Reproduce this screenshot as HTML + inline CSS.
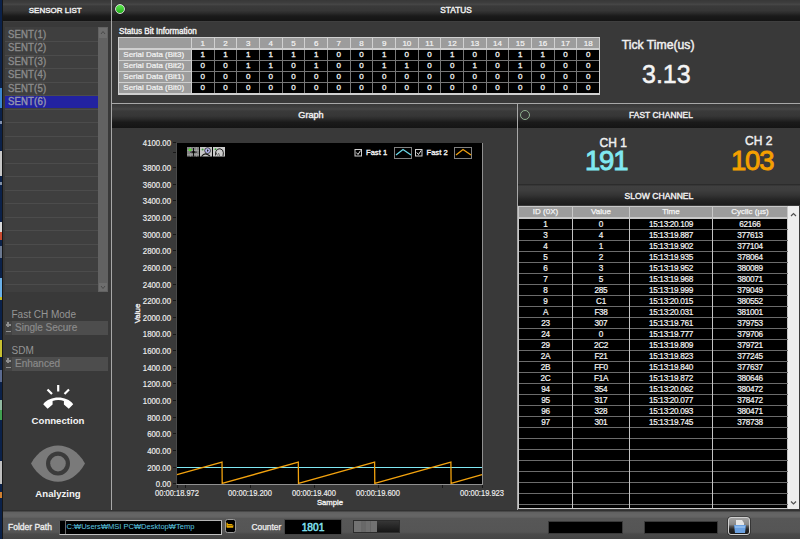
<!DOCTYPE html><html><head><meta charset="utf-8"><style>html,body{margin:0;padding:0;}body{width:800px;height:539px;overflow:hidden;position:relative;background:#393939;font-family:"Liberation Sans",sans-serif;}div{box-sizing:border-box;}</style></head><body>
<div style="position:absolute;left:0px;top:0px;width:2px;height:539px;background:#0b2149;"></div>
<div style="position:absolute;left:2px;top:0px;width:1px;height:539px;background:#161616;"></div>
<div style="position:absolute;left:0px;top:88px;width:2px;height:20px;background:#3a86d0;"></div>
<div style="position:absolute;left:0px;top:121px;width:2px;height:3px;background:#8090b0;"></div>
<div style="position:absolute;left:0px;top:151px;width:2px;height:25px;background:#c8c8c8;"></div>
<div style="position:absolute;left:0px;top:182px;width:2px;height:3px;background:#8090a8;"></div>
<div style="position:absolute;left:0px;top:222px;width:2px;height:10px;background:#d8d8d8;"></div>
<div style="position:absolute;left:0px;top:232px;width:2px;height:8px;background:#c84a30;"></div>
<div style="position:absolute;left:0px;top:246px;width:2px;height:12px;background:#6a7890;"></div>
<div style="position:absolute;left:0px;top:278px;width:2px;height:19px;background:#6ab0e8;"></div>
<div style="position:absolute;left:0px;top:297px;width:2px;height:3px;background:#c8b820;"></div>
<div style="position:absolute;left:0px;top:340px;width:2px;height:17px;background:#c8c030;"></div>
<div style="position:absolute;left:0px;top:370px;width:2px;height:12px;background:#5a6a90;"></div>
<div style="position:absolute;left:0px;top:400px;width:2px;height:10px;background:#90b8a0;"></div>
<div style="position:absolute;left:0px;top:410px;width:2px;height:10px;background:#40a050;"></div>
<div style="position:absolute;left:0px;top:461px;width:2px;height:23px;background:#c0c0c0;"></div>
<div style="position:absolute;left:0px;top:492px;width:2px;height:6px;background:#d08030;"></div>
<div style="position:absolute;left:3px;top:0px;width:108px;height:21px;background:linear-gradient(#383838 0%,#3d3d3d 12%,#464646 21%,#3a3a3a 29%,#363636 50%,#2a2a2a 63%,#1a1a1a 76%,#141414 100%);"></div>
<div style="position:absolute;left:-144.8px;top:7.0px;width:400px;text-align:center;font-size:8.0px;line-height:8.0px;color:#f0f0f0;font-weight:normal;white-space:nowrap;-webkit-text-stroke:0.4px #f0f0f0;">SENSOR LIST</div>
<div style="position:absolute;left:3px;top:21px;width:108px;height:490px;background:#393939;"></div>
<div style="position:absolute;left:3px;top:21px;width:108px;height:1px;background:#3f3f3f;"></div>
<div style="position:absolute;left:5px;top:27px;width:93px;height:265px;background:#3f3f3f;"></div>
<div style="position:absolute;left:8.3px;top:29.7px;font-size:10.2px;line-height:10.2px;color:#8c8c8c;font-weight:normal;white-space:nowrap;-webkit-text-stroke:0.35px #8c8c8c;transform:scaleX(0.94);transform-origin:0 0;letter-spacing:0.15px;">SENT(1)</div>
<div style="position:absolute;left:5px;top:41.0px;width:93px;height:1.3px;background:#4c4c4c;"></div>
<div style="position:absolute;left:8.3px;top:43.199999999999996px;font-size:10.2px;line-height:10.2px;color:#8c8c8c;font-weight:normal;white-space:nowrap;-webkit-text-stroke:0.35px #8c8c8c;transform:scaleX(0.94);transform-origin:0 0;letter-spacing:0.15px;">SENT(2)</div>
<div style="position:absolute;left:5px;top:54.5px;width:93px;height:1.3px;background:#4c4c4c;"></div>
<div style="position:absolute;left:8.3px;top:56.699999999999996px;font-size:10.2px;line-height:10.2px;color:#8c8c8c;font-weight:normal;white-space:nowrap;-webkit-text-stroke:0.35px #8c8c8c;transform:scaleX(0.94);transform-origin:0 0;letter-spacing:0.15px;">SENT(3)</div>
<div style="position:absolute;left:5px;top:68.0px;width:93px;height:1.3px;background:#4c4c4c;"></div>
<div style="position:absolute;left:8.3px;top:70.2px;font-size:10.2px;line-height:10.2px;color:#8c8c8c;font-weight:normal;white-space:nowrap;-webkit-text-stroke:0.35px #8c8c8c;transform:scaleX(0.94);transform-origin:0 0;letter-spacing:0.15px;">SENT(4)</div>
<div style="position:absolute;left:5px;top:81.5px;width:93px;height:1.3px;background:#4c4c4c;"></div>
<div style="position:absolute;left:8.3px;top:83.7px;font-size:10.2px;line-height:10.2px;color:#8c8c8c;font-weight:normal;white-space:nowrap;-webkit-text-stroke:0.35px #8c8c8c;transform:scaleX(0.94);transform-origin:0 0;letter-spacing:0.15px;">SENT(5)</div>
<div style="position:absolute;left:5px;top:95.3px;width:93px;height:13px;background:#2222a0;"></div>
<div style="position:absolute;left:5px;top:95.0px;width:93px;height:1.3px;background:#4c4c4c;"></div>
<div style="position:absolute;left:8.3px;top:97.2px;font-size:10.2px;line-height:10.2px;color:#9898b0;font-weight:normal;white-space:nowrap;-webkit-text-stroke:0.35px #9898b0;transform:scaleX(0.94);transform-origin:0 0;letter-spacing:0.15px;">SENT(6)</div>
<div style="position:absolute;left:5px;top:108.5px;width:93px;height:1.3px;background:#4c4c4c;"></div>
<div style="position:absolute;left:5px;top:122.0px;width:93px;height:1.3px;background:#4c4c4c;"></div>
<div style="position:absolute;left:5px;top:135.5px;width:93px;height:1.3px;background:#4c4c4c;"></div>
<div style="position:absolute;left:5px;top:149.0px;width:93px;height:1.3px;background:#4c4c4c;"></div>
<div style="position:absolute;left:5px;top:162.5px;width:93px;height:1.3px;background:#4c4c4c;"></div>
<div style="position:absolute;left:5px;top:176.0px;width:93px;height:1.3px;background:#4c4c4c;"></div>
<div style="position:absolute;left:5px;top:189.5px;width:93px;height:1.3px;background:#4c4c4c;"></div>
<div style="position:absolute;left:5px;top:203.0px;width:93px;height:1.3px;background:#4c4c4c;"></div>
<div style="position:absolute;left:5px;top:216.5px;width:93px;height:1.3px;background:#4c4c4c;"></div>
<div style="position:absolute;left:5px;top:230.0px;width:93px;height:1.3px;background:#4c4c4c;"></div>
<div style="position:absolute;left:5px;top:243.5px;width:93px;height:1.3px;background:#4c4c4c;"></div>
<div style="position:absolute;left:5px;top:257.0px;width:93px;height:1.3px;background:#4c4c4c;"></div>
<div style="position:absolute;left:5px;top:270.5px;width:93px;height:1.3px;background:#4c4c4c;"></div>
<div style="position:absolute;left:5px;top:284.0px;width:93px;height:1.3px;background:#4c4c4c;"></div>
<div style="position:absolute;left:98px;top:27px;width:10px;height:265px;background:#626262;"></div>
<div style="position:absolute;left:99px;top:28px;width:8px;height:10px;background:#6e6e6e;"></div>
<div style="position:absolute;left:99px;top:283px;width:8px;height:8px;background:#6e6e6e;"></div>
<svg style="position:absolute;left:99px;top:28px" width="8" height="10"><path d="M2 6 L4 3.5 L6 6" stroke="#4a4a4a" stroke-width="1" fill="none"/></svg>
<svg style="position:absolute;left:99px;top:283px" width="8" height="8"><path d="M2 3 L4 5.5 L6 3" stroke="#4a4a4a" stroke-width="1" fill="none"/></svg>
<div style="position:absolute;left:11.5px;top:310px;font-size:10px;line-height:10px;color:#959595;font-weight:normal;white-space:nowrap;">Fast CH Mode</div>
<div style="position:absolute;left:5px;top:321px;width:103px;height:14px;background:#4d4d4d;"></div>
<div style="position:absolute;left:5px;top:321px;width:6.5px;height:14px;background:#434343;"></div>
<div style="position:absolute;left:5.5px;top:324px;width:5px;height:1.5px;background:#8e8e8e;"></div>
<div style="position:absolute;left:7.2px;top:322.3px;width:1.6px;height:5px;background:#8e8e8e;"></div>
<div style="position:absolute;left:5.5px;top:330.5px;width:5px;height:1.5px;background:#8e8e8e;"></div>
<div style="position:absolute;left:15px;top:323.3px;font-size:10px;line-height:10px;color:#8a8a8a;font-weight:normal;white-space:nowrap;-webkit-text-stroke:0.2px #8a8a8a;">Single Secure</div>
<div style="position:absolute;left:11.5px;top:346px;font-size:10px;line-height:10px;color:#959595;font-weight:normal;white-space:nowrap;">SDM</div>
<div style="position:absolute;left:5px;top:357px;width:103px;height:14px;background:#4d4d4d;"></div>
<div style="position:absolute;left:5px;top:357px;width:6.5px;height:14px;background:#434343;"></div>
<div style="position:absolute;left:5.5px;top:360px;width:5px;height:1.5px;background:#8e8e8e;"></div>
<div style="position:absolute;left:7.2px;top:358.3px;width:1.6px;height:5px;background:#8e8e8e;"></div>
<div style="position:absolute;left:5.5px;top:366.5px;width:5px;height:1.5px;background:#8e8e8e;"></div>
<div style="position:absolute;left:15px;top:359.3px;font-size:10px;line-height:10px;color:#8a8a8a;font-weight:normal;white-space:nowrap;-webkit-text-stroke:0.2px #8a8a8a;">Enhanced</div>
<svg style="position:absolute;left:38px;top:380px" width="40" height="32" viewBox="0 0 40 32">
<g stroke="#fff" stroke-width="2.2" stroke-linecap="butt" fill="none">
<line x1="20.2" y1="5" x2="20.2" y2="11.5"/>
<line x1="9.5" y1="9.5" x2="14" y2="14"/>
<line x1="31" y1="9.5" x2="26.5" y2="14"/>
</g>
<path d="M5.2 24.2 C12 15.3 28.6 15.3 35.2 24.2 L30.8 28.8 L25.9 24.4 L25.9 20.9 Q20.3 19 14.6 20.9 L14.6 24.4 L9.6 28.8 Z" fill="#fff"/>
</svg>
<div style="position:absolute;left:-142px;top:415.7px;width:400px;text-align:center;font-size:9.6px;line-height:9.6px;color:#f4f4f4;font-weight:bold;white-space:nowrap;">Connection</div>
<svg style="position:absolute;left:30px;top:444px" width="56" height="40" viewBox="0 0 56 40">
<path d="M1 19.5 C14 -4.6 42 -4.6 55 19.5 C42 43.8 14 43.8 1 19.5 Z" fill="#7a7a7a"/>
<circle cx="28" cy="19.6" r="12" fill="#3b3b3b"/>
<circle cx="28" cy="19.6" r="7.8" fill="#7a7a7a"/>
</svg>
<div style="position:absolute;left:-142px;top:488.7px;width:400px;text-align:center;font-size:9.6px;line-height:9.6px;color:#f4f4f4;font-weight:bold;white-space:nowrap;">Analyzing</div>
<div style="position:absolute;left:111px;top:0px;width:1px;height:510px;background:#a8a8a8;"></div>
<div style="position:absolute;left:112px;top:0px;width:688px;height:21px;background:linear-gradient(#383838 0%,#3d3d3d 12%,#464646 21%,#3a3a3a 29%,#363636 50%,#2a2a2a 63%,#1a1a1a 76%,#141414 100%);"></div>
<div style="position:absolute;left:115.1px;top:4.4px;width:10px;height:10px;border-radius:50%;background:linear-gradient(#5ee850,#22b01a);border:1px solid #d8d8d8;box-shadow:0 0 1.5px #000;"></div>
<div style="position:absolute;left:256px;top:5.85px;width:400px;text-align:center;font-size:8.3px;line-height:8.3px;color:#f0f0f0;font-weight:normal;white-space:nowrap;-webkit-text-stroke:0.4px #f0f0f0;">STATUS</div>
<div style="position:absolute;left:112px;top:21px;width:688px;height:82px;background:#393939;"></div>
<div style="position:absolute;left:112px;top:21px;width:688px;height:1px;background:#3f3f3f;"></div>
<div style="position:absolute;left:119px;top:28px;font-size:8.15px;line-height:8.15px;color:#f0f0f0;font-weight:normal;white-space:nowrap;-webkit-text-stroke:0.4px #f0f0f0;">Status Bit Information</div>
<div style="position:absolute;left:118px;top:37px;width:482px;height:57.5px;background:#d0d0d0;"></div>
<div style="position:absolute;left:192px;top:49.5px;width:407px;height:43px;background:#777;"></div>
<div style="position:absolute;left:119px;top:38px;width:72px;height:10px;background:#9c9c9c;"></div>
<div style="position:absolute;left:119px;top:49.5px;width:72px;height:10px;background:#9c9c9c;"></div>
<div style="position:absolute;left:123.3px;top:51.1px;font-size:8px;line-height:8px;color:#f4f4f4;font-weight:normal;white-space:nowrap;-webkit-text-stroke:0.2px #f4f4f4;">Serial Data (Bit3)</div>
<div style="position:absolute;left:119px;top:60.5px;width:72px;height:10px;background:#9c9c9c;"></div>
<div style="position:absolute;left:123.3px;top:62.1px;font-size:8px;line-height:8px;color:#f4f4f4;font-weight:normal;white-space:nowrap;-webkit-text-stroke:0.2px #f4f4f4;">Serial Data (Bit2)</div>
<div style="position:absolute;left:119px;top:71.5px;width:72px;height:10px;background:#9c9c9c;"></div>
<div style="position:absolute;left:123.3px;top:73.1px;font-size:8px;line-height:8px;color:#f4f4f4;font-weight:normal;white-space:nowrap;-webkit-text-stroke:0.2px #f4f4f4;">Serial Data (Bit1)</div>
<div style="position:absolute;left:119px;top:82.5px;width:72px;height:10px;background:#9c9c9c;"></div>
<div style="position:absolute;left:123.3px;top:84.1px;font-size:8px;line-height:8px;color:#f4f4f4;font-weight:normal;white-space:nowrap;-webkit-text-stroke:0.2px #f4f4f4;">Serial Data (Bit0)</div>
<div style="position:absolute;left:192.0px;top:38px;width:21.67px;height:10px;background:#9c9c9c;"></div>
<div style="position:absolute;left:192.00px;top:38.5px;width:21.67px;text-align:center;font-size:8px;line-height:10px;color:#f4f4f4;-webkit-text-stroke:0.2px #f4f4f4;">1</div>
<div style="position:absolute;left:192.0px;top:49.5px;width:21.67px;height:10px;background:#000;"></div>
<div style="position:absolute;left:192.00px;top:49.8px;width:21.67px;text-align:center;font-size:8px;line-height:10px;color:#f4f4f4;-webkit-text-stroke:0.3px #f4f4f4;">1</div>
<div style="position:absolute;left:192.0px;top:60.5px;width:21.67px;height:10px;background:#000;"></div>
<div style="position:absolute;left:192.00px;top:60.8px;width:21.67px;text-align:center;font-size:8px;line-height:10px;color:#f4f4f4;-webkit-text-stroke:0.3px #f4f4f4;">0</div>
<div style="position:absolute;left:192.0px;top:71.5px;width:21.67px;height:10px;background:#000;"></div>
<div style="position:absolute;left:192.00px;top:71.8px;width:21.67px;text-align:center;font-size:8px;line-height:10px;color:#f4f4f4;-webkit-text-stroke:0.3px #f4f4f4;">0</div>
<div style="position:absolute;left:192.0px;top:82.5px;width:21.67px;height:10px;background:#000;"></div>
<div style="position:absolute;left:192.00px;top:82.8px;width:21.67px;text-align:center;font-size:8px;line-height:10px;color:#f4f4f4;-webkit-text-stroke:0.3px #f4f4f4;">0</div>
<div style="position:absolute;left:214.67px;top:38px;width:21.67px;height:10px;background:#9c9c9c;"></div>
<div style="position:absolute;left:214.67px;top:38.5px;width:21.67px;text-align:center;font-size:8px;line-height:10px;color:#f4f4f4;-webkit-text-stroke:0.2px #f4f4f4;">2</div>
<div style="position:absolute;left:214.67px;top:49.5px;width:21.67px;height:10px;background:#000;"></div>
<div style="position:absolute;left:214.67px;top:49.8px;width:21.67px;text-align:center;font-size:8px;line-height:10px;color:#f4f4f4;-webkit-text-stroke:0.3px #f4f4f4;">1</div>
<div style="position:absolute;left:214.67px;top:60.5px;width:21.67px;height:10px;background:#000;"></div>
<div style="position:absolute;left:214.67px;top:60.8px;width:21.67px;text-align:center;font-size:8px;line-height:10px;color:#f4f4f4;-webkit-text-stroke:0.3px #f4f4f4;">0</div>
<div style="position:absolute;left:214.67px;top:71.5px;width:21.67px;height:10px;background:#000;"></div>
<div style="position:absolute;left:214.67px;top:71.8px;width:21.67px;text-align:center;font-size:8px;line-height:10px;color:#f4f4f4;-webkit-text-stroke:0.3px #f4f4f4;">0</div>
<div style="position:absolute;left:214.67px;top:82.5px;width:21.67px;height:10px;background:#000;"></div>
<div style="position:absolute;left:214.67px;top:82.8px;width:21.67px;text-align:center;font-size:8px;line-height:10px;color:#f4f4f4;-webkit-text-stroke:0.3px #f4f4f4;">0</div>
<div style="position:absolute;left:237.33px;top:38px;width:21.67px;height:10px;background:#9c9c9c;"></div>
<div style="position:absolute;left:237.33px;top:38.5px;width:21.67px;text-align:center;font-size:8px;line-height:10px;color:#f4f4f4;-webkit-text-stroke:0.2px #f4f4f4;">3</div>
<div style="position:absolute;left:237.33px;top:49.5px;width:21.67px;height:10px;background:#000;"></div>
<div style="position:absolute;left:237.33px;top:49.8px;width:21.67px;text-align:center;font-size:8px;line-height:10px;color:#f4f4f4;-webkit-text-stroke:0.3px #f4f4f4;">1</div>
<div style="position:absolute;left:237.33px;top:60.5px;width:21.67px;height:10px;background:#000;"></div>
<div style="position:absolute;left:237.33px;top:60.8px;width:21.67px;text-align:center;font-size:8px;line-height:10px;color:#f4f4f4;-webkit-text-stroke:0.3px #f4f4f4;">1</div>
<div style="position:absolute;left:237.33px;top:71.5px;width:21.67px;height:10px;background:#000;"></div>
<div style="position:absolute;left:237.33px;top:71.8px;width:21.67px;text-align:center;font-size:8px;line-height:10px;color:#f4f4f4;-webkit-text-stroke:0.3px #f4f4f4;">0</div>
<div style="position:absolute;left:237.33px;top:82.5px;width:21.67px;height:10px;background:#000;"></div>
<div style="position:absolute;left:237.33px;top:82.8px;width:21.67px;text-align:center;font-size:8px;line-height:10px;color:#f4f4f4;-webkit-text-stroke:0.3px #f4f4f4;">0</div>
<div style="position:absolute;left:260.0px;top:38px;width:21.67px;height:10px;background:#9c9c9c;"></div>
<div style="position:absolute;left:260.00px;top:38.5px;width:21.67px;text-align:center;font-size:8px;line-height:10px;color:#f4f4f4;-webkit-text-stroke:0.2px #f4f4f4;">4</div>
<div style="position:absolute;left:260.0px;top:49.5px;width:21.67px;height:10px;background:#000;"></div>
<div style="position:absolute;left:260.00px;top:49.8px;width:21.67px;text-align:center;font-size:8px;line-height:10px;color:#f4f4f4;-webkit-text-stroke:0.3px #f4f4f4;">1</div>
<div style="position:absolute;left:260.0px;top:60.5px;width:21.67px;height:10px;background:#000;"></div>
<div style="position:absolute;left:260.00px;top:60.8px;width:21.67px;text-align:center;font-size:8px;line-height:10px;color:#f4f4f4;-webkit-text-stroke:0.3px #f4f4f4;">1</div>
<div style="position:absolute;left:260.0px;top:71.5px;width:21.67px;height:10px;background:#000;"></div>
<div style="position:absolute;left:260.00px;top:71.8px;width:21.67px;text-align:center;font-size:8px;line-height:10px;color:#f4f4f4;-webkit-text-stroke:0.3px #f4f4f4;">0</div>
<div style="position:absolute;left:260.0px;top:82.5px;width:21.67px;height:10px;background:#000;"></div>
<div style="position:absolute;left:260.00px;top:82.8px;width:21.67px;text-align:center;font-size:8px;line-height:10px;color:#f4f4f4;-webkit-text-stroke:0.3px #f4f4f4;">0</div>
<div style="position:absolute;left:282.67px;top:38px;width:21.67px;height:10px;background:#9c9c9c;"></div>
<div style="position:absolute;left:282.67px;top:38.5px;width:21.67px;text-align:center;font-size:8px;line-height:10px;color:#f4f4f4;-webkit-text-stroke:0.2px #f4f4f4;">5</div>
<div style="position:absolute;left:282.67px;top:49.5px;width:21.67px;height:10px;background:#000;"></div>
<div style="position:absolute;left:282.67px;top:49.8px;width:21.67px;text-align:center;font-size:8px;line-height:10px;color:#f4f4f4;-webkit-text-stroke:0.3px #f4f4f4;">1</div>
<div style="position:absolute;left:282.67px;top:60.5px;width:21.67px;height:10px;background:#000;"></div>
<div style="position:absolute;left:282.67px;top:60.8px;width:21.67px;text-align:center;font-size:8px;line-height:10px;color:#f4f4f4;-webkit-text-stroke:0.3px #f4f4f4;">0</div>
<div style="position:absolute;left:282.67px;top:71.5px;width:21.67px;height:10px;background:#000;"></div>
<div style="position:absolute;left:282.67px;top:71.8px;width:21.67px;text-align:center;font-size:8px;line-height:10px;color:#f4f4f4;-webkit-text-stroke:0.3px #f4f4f4;">0</div>
<div style="position:absolute;left:282.67px;top:82.5px;width:21.67px;height:10px;background:#000;"></div>
<div style="position:absolute;left:282.67px;top:82.8px;width:21.67px;text-align:center;font-size:8px;line-height:10px;color:#f4f4f4;-webkit-text-stroke:0.3px #f4f4f4;">0</div>
<div style="position:absolute;left:305.33px;top:38px;width:21.67px;height:10px;background:#9c9c9c;"></div>
<div style="position:absolute;left:305.33px;top:38.5px;width:21.67px;text-align:center;font-size:8px;line-height:10px;color:#f4f4f4;-webkit-text-stroke:0.2px #f4f4f4;">6</div>
<div style="position:absolute;left:305.33px;top:49.5px;width:21.67px;height:10px;background:#000;"></div>
<div style="position:absolute;left:305.33px;top:49.8px;width:21.67px;text-align:center;font-size:8px;line-height:10px;color:#f4f4f4;-webkit-text-stroke:0.3px #f4f4f4;">1</div>
<div style="position:absolute;left:305.33px;top:60.5px;width:21.67px;height:10px;background:#000;"></div>
<div style="position:absolute;left:305.33px;top:60.8px;width:21.67px;text-align:center;font-size:8px;line-height:10px;color:#f4f4f4;-webkit-text-stroke:0.3px #f4f4f4;">1</div>
<div style="position:absolute;left:305.33px;top:71.5px;width:21.67px;height:10px;background:#000;"></div>
<div style="position:absolute;left:305.33px;top:71.8px;width:21.67px;text-align:center;font-size:8px;line-height:10px;color:#f4f4f4;-webkit-text-stroke:0.3px #f4f4f4;">0</div>
<div style="position:absolute;left:305.33px;top:82.5px;width:21.67px;height:10px;background:#000;"></div>
<div style="position:absolute;left:305.33px;top:82.8px;width:21.67px;text-align:center;font-size:8px;line-height:10px;color:#f4f4f4;-webkit-text-stroke:0.3px #f4f4f4;">0</div>
<div style="position:absolute;left:328.0px;top:38px;width:21.67px;height:10px;background:#9c9c9c;"></div>
<div style="position:absolute;left:328.00px;top:38.5px;width:21.67px;text-align:center;font-size:8px;line-height:10px;color:#f4f4f4;-webkit-text-stroke:0.2px #f4f4f4;">7</div>
<div style="position:absolute;left:328.0px;top:49.5px;width:21.67px;height:10px;background:#000;"></div>
<div style="position:absolute;left:328.00px;top:49.8px;width:21.67px;text-align:center;font-size:8px;line-height:10px;color:#f4f4f4;-webkit-text-stroke:0.3px #f4f4f4;">0</div>
<div style="position:absolute;left:328.0px;top:60.5px;width:21.67px;height:10px;background:#000;"></div>
<div style="position:absolute;left:328.00px;top:60.8px;width:21.67px;text-align:center;font-size:8px;line-height:10px;color:#f4f4f4;-webkit-text-stroke:0.3px #f4f4f4;">0</div>
<div style="position:absolute;left:328.0px;top:71.5px;width:21.67px;height:10px;background:#000;"></div>
<div style="position:absolute;left:328.00px;top:71.8px;width:21.67px;text-align:center;font-size:8px;line-height:10px;color:#f4f4f4;-webkit-text-stroke:0.3px #f4f4f4;">0</div>
<div style="position:absolute;left:328.0px;top:82.5px;width:21.67px;height:10px;background:#000;"></div>
<div style="position:absolute;left:328.00px;top:82.8px;width:21.67px;text-align:center;font-size:8px;line-height:10px;color:#f4f4f4;-webkit-text-stroke:0.3px #f4f4f4;">0</div>
<div style="position:absolute;left:350.67px;top:38px;width:21.67px;height:10px;background:#9c9c9c;"></div>
<div style="position:absolute;left:350.67px;top:38.5px;width:21.67px;text-align:center;font-size:8px;line-height:10px;color:#f4f4f4;-webkit-text-stroke:0.2px #f4f4f4;">8</div>
<div style="position:absolute;left:350.67px;top:49.5px;width:21.67px;height:10px;background:#000;"></div>
<div style="position:absolute;left:350.67px;top:49.8px;width:21.67px;text-align:center;font-size:8px;line-height:10px;color:#f4f4f4;-webkit-text-stroke:0.3px #f4f4f4;">0</div>
<div style="position:absolute;left:350.67px;top:60.5px;width:21.67px;height:10px;background:#000;"></div>
<div style="position:absolute;left:350.67px;top:60.8px;width:21.67px;text-align:center;font-size:8px;line-height:10px;color:#f4f4f4;-webkit-text-stroke:0.3px #f4f4f4;">0</div>
<div style="position:absolute;left:350.67px;top:71.5px;width:21.67px;height:10px;background:#000;"></div>
<div style="position:absolute;left:350.67px;top:71.8px;width:21.67px;text-align:center;font-size:8px;line-height:10px;color:#f4f4f4;-webkit-text-stroke:0.3px #f4f4f4;">0</div>
<div style="position:absolute;left:350.67px;top:82.5px;width:21.67px;height:10px;background:#000;"></div>
<div style="position:absolute;left:350.67px;top:82.8px;width:21.67px;text-align:center;font-size:8px;line-height:10px;color:#f4f4f4;-webkit-text-stroke:0.3px #f4f4f4;">0</div>
<div style="position:absolute;left:373.33px;top:38px;width:21.67px;height:10px;background:#9c9c9c;"></div>
<div style="position:absolute;left:373.33px;top:38.5px;width:21.67px;text-align:center;font-size:8px;line-height:10px;color:#f4f4f4;-webkit-text-stroke:0.2px #f4f4f4;">9</div>
<div style="position:absolute;left:373.33px;top:49.5px;width:21.67px;height:10px;background:#000;"></div>
<div style="position:absolute;left:373.33px;top:49.8px;width:21.67px;text-align:center;font-size:8px;line-height:10px;color:#f4f4f4;-webkit-text-stroke:0.3px #f4f4f4;">1</div>
<div style="position:absolute;left:373.33px;top:60.5px;width:21.67px;height:10px;background:#000;"></div>
<div style="position:absolute;left:373.33px;top:60.8px;width:21.67px;text-align:center;font-size:8px;line-height:10px;color:#f4f4f4;-webkit-text-stroke:0.3px #f4f4f4;">1</div>
<div style="position:absolute;left:373.33px;top:71.5px;width:21.67px;height:10px;background:#000;"></div>
<div style="position:absolute;left:373.33px;top:71.8px;width:21.67px;text-align:center;font-size:8px;line-height:10px;color:#f4f4f4;-webkit-text-stroke:0.3px #f4f4f4;">0</div>
<div style="position:absolute;left:373.33px;top:82.5px;width:21.67px;height:10px;background:#000;"></div>
<div style="position:absolute;left:373.33px;top:82.8px;width:21.67px;text-align:center;font-size:8px;line-height:10px;color:#f4f4f4;-webkit-text-stroke:0.3px #f4f4f4;">0</div>
<div style="position:absolute;left:396.0px;top:38px;width:21.67px;height:10px;background:#9c9c9c;"></div>
<div style="position:absolute;left:396.00px;top:38.5px;width:21.67px;text-align:center;font-size:8px;line-height:10px;color:#f4f4f4;-webkit-text-stroke:0.2px #f4f4f4;">10</div>
<div style="position:absolute;left:396.0px;top:49.5px;width:21.67px;height:10px;background:#000;"></div>
<div style="position:absolute;left:396.00px;top:49.8px;width:21.67px;text-align:center;font-size:8px;line-height:10px;color:#f4f4f4;-webkit-text-stroke:0.3px #f4f4f4;">0</div>
<div style="position:absolute;left:396.0px;top:60.5px;width:21.67px;height:10px;background:#000;"></div>
<div style="position:absolute;left:396.00px;top:60.8px;width:21.67px;text-align:center;font-size:8px;line-height:10px;color:#f4f4f4;-webkit-text-stroke:0.3px #f4f4f4;">1</div>
<div style="position:absolute;left:396.0px;top:71.5px;width:21.67px;height:10px;background:#000;"></div>
<div style="position:absolute;left:396.00px;top:71.8px;width:21.67px;text-align:center;font-size:8px;line-height:10px;color:#f4f4f4;-webkit-text-stroke:0.3px #f4f4f4;">0</div>
<div style="position:absolute;left:396.0px;top:82.5px;width:21.67px;height:10px;background:#000;"></div>
<div style="position:absolute;left:396.00px;top:82.8px;width:21.67px;text-align:center;font-size:8px;line-height:10px;color:#f4f4f4;-webkit-text-stroke:0.3px #f4f4f4;">0</div>
<div style="position:absolute;left:418.67px;top:38px;width:21.67px;height:10px;background:#9c9c9c;"></div>
<div style="position:absolute;left:418.67px;top:38.5px;width:21.67px;text-align:center;font-size:8px;line-height:10px;color:#f4f4f4;-webkit-text-stroke:0.2px #f4f4f4;">11</div>
<div style="position:absolute;left:418.67px;top:49.5px;width:21.67px;height:10px;background:#000;"></div>
<div style="position:absolute;left:418.67px;top:49.8px;width:21.67px;text-align:center;font-size:8px;line-height:10px;color:#f4f4f4;-webkit-text-stroke:0.3px #f4f4f4;">0</div>
<div style="position:absolute;left:418.67px;top:60.5px;width:21.67px;height:10px;background:#000;"></div>
<div style="position:absolute;left:418.67px;top:60.8px;width:21.67px;text-align:center;font-size:8px;line-height:10px;color:#f4f4f4;-webkit-text-stroke:0.3px #f4f4f4;">0</div>
<div style="position:absolute;left:418.67px;top:71.5px;width:21.67px;height:10px;background:#000;"></div>
<div style="position:absolute;left:418.67px;top:71.8px;width:21.67px;text-align:center;font-size:8px;line-height:10px;color:#f4f4f4;-webkit-text-stroke:0.3px #f4f4f4;">0</div>
<div style="position:absolute;left:418.67px;top:82.5px;width:21.67px;height:10px;background:#000;"></div>
<div style="position:absolute;left:418.67px;top:82.8px;width:21.67px;text-align:center;font-size:8px;line-height:10px;color:#f4f4f4;-webkit-text-stroke:0.3px #f4f4f4;">0</div>
<div style="position:absolute;left:441.33px;top:38px;width:21.67px;height:10px;background:#9c9c9c;"></div>
<div style="position:absolute;left:441.33px;top:38.5px;width:21.67px;text-align:center;font-size:8px;line-height:10px;color:#f4f4f4;-webkit-text-stroke:0.2px #f4f4f4;">12</div>
<div style="position:absolute;left:441.33px;top:49.5px;width:21.67px;height:10px;background:#000;"></div>
<div style="position:absolute;left:441.33px;top:49.8px;width:21.67px;text-align:center;font-size:8px;line-height:10px;color:#f4f4f4;-webkit-text-stroke:0.3px #f4f4f4;">1</div>
<div style="position:absolute;left:441.33px;top:60.5px;width:21.67px;height:10px;background:#000;"></div>
<div style="position:absolute;left:441.33px;top:60.8px;width:21.67px;text-align:center;font-size:8px;line-height:10px;color:#f4f4f4;-webkit-text-stroke:0.3px #f4f4f4;">0</div>
<div style="position:absolute;left:441.33px;top:71.5px;width:21.67px;height:10px;background:#000;"></div>
<div style="position:absolute;left:441.33px;top:71.8px;width:21.67px;text-align:center;font-size:8px;line-height:10px;color:#f4f4f4;-webkit-text-stroke:0.3px #f4f4f4;">0</div>
<div style="position:absolute;left:441.33px;top:82.5px;width:21.67px;height:10px;background:#000;"></div>
<div style="position:absolute;left:441.33px;top:82.8px;width:21.67px;text-align:center;font-size:8px;line-height:10px;color:#f4f4f4;-webkit-text-stroke:0.3px #f4f4f4;">0</div>
<div style="position:absolute;left:464.0px;top:38px;width:21.67px;height:10px;background:#9c9c9c;"></div>
<div style="position:absolute;left:464.00px;top:38.5px;width:21.67px;text-align:center;font-size:8px;line-height:10px;color:#f4f4f4;-webkit-text-stroke:0.2px #f4f4f4;">13</div>
<div style="position:absolute;left:464.0px;top:49.5px;width:21.67px;height:10px;background:#000;"></div>
<div style="position:absolute;left:464.00px;top:49.8px;width:21.67px;text-align:center;font-size:8px;line-height:10px;color:#f4f4f4;-webkit-text-stroke:0.3px #f4f4f4;">0</div>
<div style="position:absolute;left:464.0px;top:60.5px;width:21.67px;height:10px;background:#000;"></div>
<div style="position:absolute;left:464.00px;top:60.8px;width:21.67px;text-align:center;font-size:8px;line-height:10px;color:#f4f4f4;-webkit-text-stroke:0.3px #f4f4f4;">1</div>
<div style="position:absolute;left:464.0px;top:71.5px;width:21.67px;height:10px;background:#000;"></div>
<div style="position:absolute;left:464.00px;top:71.8px;width:21.67px;text-align:center;font-size:8px;line-height:10px;color:#f4f4f4;-webkit-text-stroke:0.3px #f4f4f4;">0</div>
<div style="position:absolute;left:464.0px;top:82.5px;width:21.67px;height:10px;background:#000;"></div>
<div style="position:absolute;left:464.00px;top:82.8px;width:21.67px;text-align:center;font-size:8px;line-height:10px;color:#f4f4f4;-webkit-text-stroke:0.3px #f4f4f4;">0</div>
<div style="position:absolute;left:486.67px;top:38px;width:21.67px;height:10px;background:#9c9c9c;"></div>
<div style="position:absolute;left:486.67px;top:38.5px;width:21.67px;text-align:center;font-size:8px;line-height:10px;color:#f4f4f4;-webkit-text-stroke:0.2px #f4f4f4;">14</div>
<div style="position:absolute;left:486.67px;top:49.5px;width:21.67px;height:10px;background:#000;"></div>
<div style="position:absolute;left:486.67px;top:49.8px;width:21.67px;text-align:center;font-size:8px;line-height:10px;color:#f4f4f4;-webkit-text-stroke:0.3px #f4f4f4;">0</div>
<div style="position:absolute;left:486.67px;top:60.5px;width:21.67px;height:10px;background:#000;"></div>
<div style="position:absolute;left:486.67px;top:60.8px;width:21.67px;text-align:center;font-size:8px;line-height:10px;color:#f4f4f4;-webkit-text-stroke:0.3px #f4f4f4;">0</div>
<div style="position:absolute;left:486.67px;top:71.5px;width:21.67px;height:10px;background:#000;"></div>
<div style="position:absolute;left:486.67px;top:71.8px;width:21.67px;text-align:center;font-size:8px;line-height:10px;color:#f4f4f4;-webkit-text-stroke:0.3px #f4f4f4;">0</div>
<div style="position:absolute;left:486.67px;top:82.5px;width:21.67px;height:10px;background:#000;"></div>
<div style="position:absolute;left:486.67px;top:82.8px;width:21.67px;text-align:center;font-size:8px;line-height:10px;color:#f4f4f4;-webkit-text-stroke:0.3px #f4f4f4;">0</div>
<div style="position:absolute;left:509.33px;top:38px;width:21.67px;height:10px;background:#9c9c9c;"></div>
<div style="position:absolute;left:509.33px;top:38.5px;width:21.67px;text-align:center;font-size:8px;line-height:10px;color:#f4f4f4;-webkit-text-stroke:0.2px #f4f4f4;">15</div>
<div style="position:absolute;left:509.33px;top:49.5px;width:21.67px;height:10px;background:#000;"></div>
<div style="position:absolute;left:509.33px;top:49.8px;width:21.67px;text-align:center;font-size:8px;line-height:10px;color:#f4f4f4;-webkit-text-stroke:0.3px #f4f4f4;">1</div>
<div style="position:absolute;left:509.33px;top:60.5px;width:21.67px;height:10px;background:#000;"></div>
<div style="position:absolute;left:509.33px;top:60.8px;width:21.67px;text-align:center;font-size:8px;line-height:10px;color:#f4f4f4;-webkit-text-stroke:0.3px #f4f4f4;">1</div>
<div style="position:absolute;left:509.33px;top:71.5px;width:21.67px;height:10px;background:#000;"></div>
<div style="position:absolute;left:509.33px;top:71.8px;width:21.67px;text-align:center;font-size:8px;line-height:10px;color:#f4f4f4;-webkit-text-stroke:0.3px #f4f4f4;">0</div>
<div style="position:absolute;left:509.33px;top:82.5px;width:21.67px;height:10px;background:#000;"></div>
<div style="position:absolute;left:509.33px;top:82.8px;width:21.67px;text-align:center;font-size:8px;line-height:10px;color:#f4f4f4;-webkit-text-stroke:0.3px #f4f4f4;">0</div>
<div style="position:absolute;left:532.0px;top:38px;width:21.67px;height:10px;background:#9c9c9c;"></div>
<div style="position:absolute;left:532.00px;top:38.5px;width:21.67px;text-align:center;font-size:8px;line-height:10px;color:#f4f4f4;-webkit-text-stroke:0.2px #f4f4f4;">16</div>
<div style="position:absolute;left:532.0px;top:49.5px;width:21.67px;height:10px;background:#000;"></div>
<div style="position:absolute;left:532.00px;top:49.8px;width:21.67px;text-align:center;font-size:8px;line-height:10px;color:#f4f4f4;-webkit-text-stroke:0.3px #f4f4f4;">1</div>
<div style="position:absolute;left:532.0px;top:60.5px;width:21.67px;height:10px;background:#000;"></div>
<div style="position:absolute;left:532.00px;top:60.8px;width:21.67px;text-align:center;font-size:8px;line-height:10px;color:#f4f4f4;-webkit-text-stroke:0.3px #f4f4f4;">0</div>
<div style="position:absolute;left:532.0px;top:71.5px;width:21.67px;height:10px;background:#000;"></div>
<div style="position:absolute;left:532.00px;top:71.8px;width:21.67px;text-align:center;font-size:8px;line-height:10px;color:#f4f4f4;-webkit-text-stroke:0.3px #f4f4f4;">0</div>
<div style="position:absolute;left:532.0px;top:82.5px;width:21.67px;height:10px;background:#000;"></div>
<div style="position:absolute;left:532.00px;top:82.8px;width:21.67px;text-align:center;font-size:8px;line-height:10px;color:#f4f4f4;-webkit-text-stroke:0.3px #f4f4f4;">0</div>
<div style="position:absolute;left:554.67px;top:38px;width:21.67px;height:10px;background:#9c9c9c;"></div>
<div style="position:absolute;left:554.67px;top:38.5px;width:21.67px;text-align:center;font-size:8px;line-height:10px;color:#f4f4f4;-webkit-text-stroke:0.2px #f4f4f4;">17</div>
<div style="position:absolute;left:554.67px;top:49.5px;width:21.67px;height:10px;background:#000;"></div>
<div style="position:absolute;left:554.67px;top:49.8px;width:21.67px;text-align:center;font-size:8px;line-height:10px;color:#f4f4f4;-webkit-text-stroke:0.3px #f4f4f4;">0</div>
<div style="position:absolute;left:554.67px;top:60.5px;width:21.67px;height:10px;background:#000;"></div>
<div style="position:absolute;left:554.67px;top:60.8px;width:21.67px;text-align:center;font-size:8px;line-height:10px;color:#f4f4f4;-webkit-text-stroke:0.3px #f4f4f4;">0</div>
<div style="position:absolute;left:554.67px;top:71.5px;width:21.67px;height:10px;background:#000;"></div>
<div style="position:absolute;left:554.67px;top:71.8px;width:21.67px;text-align:center;font-size:8px;line-height:10px;color:#f4f4f4;-webkit-text-stroke:0.3px #f4f4f4;">0</div>
<div style="position:absolute;left:554.67px;top:82.5px;width:21.67px;height:10px;background:#000;"></div>
<div style="position:absolute;left:554.67px;top:82.8px;width:21.67px;text-align:center;font-size:8px;line-height:10px;color:#f4f4f4;-webkit-text-stroke:0.3px #f4f4f4;">0</div>
<div style="position:absolute;left:577.33px;top:38px;width:21.67px;height:10px;background:#9c9c9c;"></div>
<div style="position:absolute;left:577.33px;top:38.5px;width:21.67px;text-align:center;font-size:8px;line-height:10px;color:#f4f4f4;-webkit-text-stroke:0.2px #f4f4f4;">18</div>
<div style="position:absolute;left:577.33px;top:49.5px;width:21.67px;height:10px;background:#000;"></div>
<div style="position:absolute;left:577.33px;top:49.8px;width:21.67px;text-align:center;font-size:8px;line-height:10px;color:#f4f4f4;-webkit-text-stroke:0.3px #f4f4f4;">0</div>
<div style="position:absolute;left:577.33px;top:60.5px;width:21.67px;height:10px;background:#000;"></div>
<div style="position:absolute;left:577.33px;top:60.8px;width:21.67px;text-align:center;font-size:8px;line-height:10px;color:#f4f4f4;-webkit-text-stroke:0.3px #f4f4f4;">0</div>
<div style="position:absolute;left:577.33px;top:71.5px;width:21.67px;height:10px;background:#000;"></div>
<div style="position:absolute;left:577.33px;top:71.8px;width:21.67px;text-align:center;font-size:8px;line-height:10px;color:#f4f4f4;-webkit-text-stroke:0.3px #f4f4f4;">0</div>
<div style="position:absolute;left:577.33px;top:82.5px;width:21.67px;height:10px;background:#000;"></div>
<div style="position:absolute;left:577.33px;top:82.8px;width:21.67px;text-align:center;font-size:8px;line-height:10px;color:#f4f4f4;-webkit-text-stroke:0.3px #f4f4f4;">0</div>
<div style="position:absolute;left:621.8px;top:39px;font-size:12.2px;line-height:12.2px;color:#f0f0f0;font-weight:normal;white-space:nowrap;-webkit-text-stroke:0.45px #f0f0f0;">Tick Time(us)</div>
<div style="position:absolute;left:642px;top:61.5px;font-size:25px;line-height:25px;color:#f4f4f4;font-weight:normal;white-space:nowrap;-webkit-text-stroke:0.5px #f4f4f4;">3.13</div>
<div style="position:absolute;left:111px;top:103px;width:689px;height:1px;background:#a8a8a8;"></div>
<div style="position:absolute;left:112px;top:104px;width:405px;height:24px;background:linear-gradient(#383838 0%,#3d3d3d 12%,#464646 21%,#3a3a3a 29%,#363636 50%,#2a2a2a 63%,#1a1a1a 76%,#141414 100%);"></div>
<div style="position:absolute;left:111px;top:110.95px;width:400px;text-align:center;font-size:9.1px;line-height:9.1px;color:#f0f0f0;font-weight:normal;white-space:nowrap;-webkit-text-stroke:0.4px #f0f0f0;">Graph</div>
<div style="position:absolute;left:176px;top:143px;width:307px;height:342px;background:#000;border-left:1px solid #4a4a4a;border-bottom:1px solid #909090;border-right:1px solid #909090;"></div>
<div style="position:absolute;left:-128.7px;top:140.14999999999998px;width:300px;text-align:right;font-size:8.2px;line-height:8.2px;color:#f0f0f0;font-weight:normal;white-space:nowrap;-webkit-text-stroke:0.15px #f0f0f0;transform:scaleX(0.95);transform-origin:100% 50%;">4100.00</div>
<div style="position:absolute;left:173px;top:142.15px;width:3px;height:1px;background:#181818;"></div>
<div style="position:absolute;left:-128.7px;top:165.1085365853658px;width:300px;text-align:right;font-size:8.2px;line-height:8.2px;color:#f0f0f0;font-weight:normal;white-space:nowrap;-webkit-text-stroke:0.15px #f0f0f0;transform:scaleX(0.95);transform-origin:100% 50%;">3800.00</div>
<div style="position:absolute;left:173px;top:167.11px;width:3px;height:1px;background:#181818;"></div>
<div style="position:absolute;left:-128.7px;top:181.74756097560976px;width:300px;text-align:right;font-size:8.2px;line-height:8.2px;color:#f0f0f0;font-weight:normal;white-space:nowrap;-webkit-text-stroke:0.15px #f0f0f0;transform:scaleX(0.95);transform-origin:100% 50%;">3600.00</div>
<div style="position:absolute;left:173px;top:183.75px;width:3px;height:1px;background:#181818;"></div>
<div style="position:absolute;left:-128.7px;top:198.38658536585365px;width:300px;text-align:right;font-size:8.2px;line-height:8.2px;color:#f0f0f0;font-weight:normal;white-space:nowrap;-webkit-text-stroke:0.15px #f0f0f0;transform:scaleX(0.95);transform-origin:100% 50%;">3400.00</div>
<div style="position:absolute;left:173px;top:200.39px;width:3px;height:1px;background:#181818;"></div>
<div style="position:absolute;left:-128.7px;top:215.02560975609754px;width:300px;text-align:right;font-size:8.2px;line-height:8.2px;color:#f0f0f0;font-weight:normal;white-space:nowrap;-webkit-text-stroke:0.15px #f0f0f0;transform:scaleX(0.95);transform-origin:100% 50%;">3200.00</div>
<div style="position:absolute;left:173px;top:217.03px;width:3px;height:1px;background:#181818;"></div>
<div style="position:absolute;left:-128.7px;top:231.66463414634146px;width:300px;text-align:right;font-size:8.2px;line-height:8.2px;color:#f0f0f0;font-weight:normal;white-space:nowrap;-webkit-text-stroke:0.15px #f0f0f0;transform:scaleX(0.95);transform-origin:100% 50%;">3000.00</div>
<div style="position:absolute;left:173px;top:233.66px;width:3px;height:1px;background:#181818;"></div>
<div style="position:absolute;left:-128.7px;top:248.30365853658535px;width:300px;text-align:right;font-size:8.2px;line-height:8.2px;color:#f0f0f0;font-weight:normal;white-space:nowrap;-webkit-text-stroke:0.15px #f0f0f0;transform:scaleX(0.95);transform-origin:100% 50%;">2800.00</div>
<div style="position:absolute;left:173px;top:250.3px;width:3px;height:1px;background:#181818;"></div>
<div style="position:absolute;left:-128.7px;top:264.94268292682926px;width:300px;text-align:right;font-size:8.2px;line-height:8.2px;color:#f0f0f0;font-weight:normal;white-space:nowrap;-webkit-text-stroke:0.15px #f0f0f0;transform:scaleX(0.95);transform-origin:100% 50%;">2600.00</div>
<div style="position:absolute;left:173px;top:266.94px;width:3px;height:1px;background:#181818;"></div>
<div style="position:absolute;left:-128.7px;top:281.58170731707315px;width:300px;text-align:right;font-size:8.2px;line-height:8.2px;color:#f0f0f0;font-weight:normal;white-space:nowrap;-webkit-text-stroke:0.15px #f0f0f0;transform:scaleX(0.95);transform-origin:100% 50%;">2400.00</div>
<div style="position:absolute;left:173px;top:283.58px;width:3px;height:1px;background:#181818;"></div>
<div style="position:absolute;left:-128.7px;top:298.2207317073171px;width:300px;text-align:right;font-size:8.2px;line-height:8.2px;color:#f0f0f0;font-weight:normal;white-space:nowrap;-webkit-text-stroke:0.15px #f0f0f0;transform:scaleX(0.95);transform-origin:100% 50%;">2200.00</div>
<div style="position:absolute;left:173px;top:300.22px;width:3px;height:1px;background:#181818;"></div>
<div style="position:absolute;left:-128.7px;top:314.859756097561px;width:300px;text-align:right;font-size:8.2px;line-height:8.2px;color:#f0f0f0;font-weight:normal;white-space:nowrap;-webkit-text-stroke:0.15px #f0f0f0;transform:scaleX(0.95);transform-origin:100% 50%;">2000.00</div>
<div style="position:absolute;left:173px;top:316.86px;width:3px;height:1px;background:#181818;"></div>
<div style="position:absolute;left:-128.7px;top:331.4987804878049px;width:300px;text-align:right;font-size:8.2px;line-height:8.2px;color:#f0f0f0;font-weight:normal;white-space:nowrap;-webkit-text-stroke:0.15px #f0f0f0;transform:scaleX(0.95);transform-origin:100% 50%;">1800.00</div>
<div style="position:absolute;left:173px;top:333.5px;width:3px;height:1px;background:#181818;"></div>
<div style="position:absolute;left:-128.7px;top:348.13780487804877px;width:300px;text-align:right;font-size:8.2px;line-height:8.2px;color:#f0f0f0;font-weight:normal;white-space:nowrap;-webkit-text-stroke:0.15px #f0f0f0;transform:scaleX(0.95);transform-origin:100% 50%;">1600.00</div>
<div style="position:absolute;left:173px;top:350.14px;width:3px;height:1px;background:#181818;"></div>
<div style="position:absolute;left:-128.7px;top:364.77682926829266px;width:300px;text-align:right;font-size:8.2px;line-height:8.2px;color:#f0f0f0;font-weight:normal;white-space:nowrap;-webkit-text-stroke:0.15px #f0f0f0;transform:scaleX(0.95);transform-origin:100% 50%;">1400.00</div>
<div style="position:absolute;left:173px;top:366.78px;width:3px;height:1px;background:#181818;"></div>
<div style="position:absolute;left:-128.7px;top:381.41585365853655px;width:300px;text-align:right;font-size:8.2px;line-height:8.2px;color:#f0f0f0;font-weight:normal;white-space:nowrap;-webkit-text-stroke:0.15px #f0f0f0;transform:scaleX(0.95);transform-origin:100% 50%;">1200.00</div>
<div style="position:absolute;left:173px;top:383.42px;width:3px;height:1px;background:#181818;"></div>
<div style="position:absolute;left:-128.7px;top:398.0548780487805px;width:300px;text-align:right;font-size:8.2px;line-height:8.2px;color:#f0f0f0;font-weight:normal;white-space:nowrap;-webkit-text-stroke:0.15px #f0f0f0;transform:scaleX(0.95);transform-origin:100% 50%;">1000.00</div>
<div style="position:absolute;left:173px;top:400.05px;width:3px;height:1px;background:#181818;"></div>
<div style="position:absolute;left:-128.7px;top:414.6939024390244px;width:300px;text-align:right;font-size:8.2px;line-height:8.2px;color:#f0f0f0;font-weight:normal;white-space:nowrap;-webkit-text-stroke:0.15px #f0f0f0;transform:scaleX(0.95);transform-origin:100% 50%;">800.00</div>
<div style="position:absolute;left:173px;top:416.69px;width:3px;height:1px;background:#181818;"></div>
<div style="position:absolute;left:-128.7px;top:431.3329268292683px;width:300px;text-align:right;font-size:8.2px;line-height:8.2px;color:#f0f0f0;font-weight:normal;white-space:nowrap;-webkit-text-stroke:0.15px #f0f0f0;transform:scaleX(0.95);transform-origin:100% 50%;">600.00</div>
<div style="position:absolute;left:173px;top:433.33px;width:3px;height:1px;background:#181818;"></div>
<div style="position:absolute;left:-128.7px;top:447.9719512195122px;width:300px;text-align:right;font-size:8.2px;line-height:8.2px;color:#f0f0f0;font-weight:normal;white-space:nowrap;-webkit-text-stroke:0.15px #f0f0f0;transform:scaleX(0.95);transform-origin:100% 50%;">400.00</div>
<div style="position:absolute;left:173px;top:449.97px;width:3px;height:1px;background:#181818;"></div>
<div style="position:absolute;left:-128.7px;top:464.6109756097561px;width:300px;text-align:right;font-size:8.2px;line-height:8.2px;color:#f0f0f0;font-weight:normal;white-space:nowrap;-webkit-text-stroke:0.15px #f0f0f0;transform:scaleX(0.95);transform-origin:100% 50%;">200.00</div>
<div style="position:absolute;left:173px;top:466.61px;width:3px;height:1px;background:#181818;"></div>
<div style="position:absolute;left:-128.7px;top:481.25px;width:300px;text-align:right;font-size:8.2px;line-height:8.2px;color:#f0f0f0;font-weight:normal;white-space:nowrap;-webkit-text-stroke:0.15px #f0f0f0;transform:scaleX(0.95);transform-origin:100% 50%;">0.00</div>
<div style="position:absolute;left:173px;top:483.25px;width:3px;height:1px;background:#181818;"></div>
<div style="position:absolute;left:173px;top:152px;width:3px;height:1px;background:#181818;"></div>
<div style="position:absolute;left:-23.5px;top:489.7px;width:400px;text-align:center;font-size:8.2px;line-height:8.2px;color:#f0f0f0;font-weight:normal;white-space:nowrap;-webkit-text-stroke:0.15px #f0f0f0;transform:scaleX(0.92);transform-origin:50% 50%;">00:00:18.972</div>
<div style="position:absolute;left:49.71079999999935px;top:489.7px;width:400px;text-align:center;font-size:8.2px;line-height:8.2px;color:#f0f0f0;font-weight:normal;white-space:nowrap;-webkit-text-stroke:0.15px #f0f0f0;transform:scaleX(0.92);transform-origin:50% 50%;">00:00:19.200</div>
<div style="position:absolute;left:113.93079999999912px;top:489.7px;width:400px;text-align:center;font-size:8.2px;line-height:8.2px;color:#f0f0f0;font-weight:normal;white-space:nowrap;-webkit-text-stroke:0.15px #f0f0f0;transform:scaleX(0.92);transform-origin:50% 50%;">00:00:19.400</div>
<div style="position:absolute;left:178.15080000000006px;top:489.7px;width:400px;text-align:center;font-size:8.2px;line-height:8.2px;color:#f0f0f0;font-weight:normal;white-space:nowrap;-webkit-text-stroke:0.15px #f0f0f0;transform:scaleX(0.92);transform-origin:50% 50%;">00:00:19.600</div>
<div style="position:absolute;left:281.86609999999905px;top:489.7px;width:400px;text-align:center;font-size:8.2px;line-height:8.2px;color:#f0f0f0;font-weight:normal;white-space:nowrap;-webkit-text-stroke:0.15px #f0f0f0;transform:scaleX(0.92);transform-origin:50% 50%;">00:00:19.923</div>
<div style="position:absolute;left:176.5px;top:485px;width:1px;height:3px;background:#181818;"></div>
<div style="position:absolute;left:185.49px;top:485px;width:1px;height:3px;background:#181818;"></div>
<div style="position:absolute;left:249.71px;top:485px;width:1px;height:3px;background:#181818;"></div>
<div style="position:absolute;left:313.93px;top:485px;width:1px;height:3px;background:#181818;"></div>
<div style="position:absolute;left:378.15px;top:485px;width:1px;height:3px;background:#181818;"></div>
<div style="position:absolute;left:442.37px;top:485px;width:1px;height:3px;background:#181818;"></div>
<div style="position:absolute;left:481.87px;top:485px;width:1px;height:3px;background:#181818;"></div>
<div style="position:absolute;left:130px;top:499.15px;width:400px;text-align:center;font-size:7.7px;line-height:7.7px;color:#f0f0f0;font-weight:normal;white-space:nowrap;-webkit-text-stroke:0.35px #f0f0f0;">Sample</div>
<div style="position:absolute;left:117px;top:309px;width:40px;height:9px;text-align:center;font-size:7.9px;line-height:9px;color:#f0f0f0;-webkit-text-stroke:0.35px #f0f0f0;transform:rotate(-90deg);">Value</div>
<svg style="position:absolute;left:187px;top:146.8px" width="40" height="10" viewBox="0 0 40 10">
<rect x="0" y="0" width="12" height="9.5" fill="#858585"/>
<rect x="0" y="3" width="12" height="0.8" fill="#a0a0a0"/><rect x="0" y="7" width="12" height="0.8" fill="#a0a0a0"/>
<rect x="3" y="0" width="0.8" height="9.5" fill="#a0a0a0"/><rect x="9" y="0" width="0.8" height="9.5" fill="#a0a0a0"/>
<rect x="6" y="1" width="1" height="8.5" fill="#111"/><rect x="3" y="4.6" width="7" height="1" fill="#222"/><circle cx="6.5" cy="5" r="1.2" fill="#000"/>
<ellipse cx="3" cy="2.7" rx="1.6" ry="1.2" fill="#50e030"/>
<rect x="13" y="0" width="12" height="9.5" fill="#c6c6c6"/>
<circle cx="20.6" cy="3.6" r="2.9" fill="#b4b4ee" stroke="#333" stroke-width="0.9"/><path d="M20 2.3 L21.8 3.6 L20 4.9 Z" fill="#222"/>
<path d="M14.5 9.5 Q17.5 5.5 20.5 7.5 L23 9" stroke="#111" stroke-width="1.1" fill="none"/>
<circle cx="15.6" cy="2.4" r="1" fill="#40a040"/>
<rect x="26" y="0" width="12" height="9.5" fill="#cccccc"/>
<path d="M28.5 8.5 Q28 4 30.5 2.3 Q33 0.8 35.5 3 Q37 5.5 36 9" stroke="#222" stroke-width="1" fill="none"/>
<path d="M29 5.5 L30.5 8.5 M31.5 6 L32.5 9" stroke="#444" stroke-width="0.8" fill="none"/>
<circle cx="28.5" cy="2.3" r="1" fill="#40a040"/>
</svg>
<svg style="position:absolute;left:354px;top:146px" width="120" height="14">
<rect x="1" y="3.5" width="6.5" height="6.5" fill="#000" stroke="#d0d0d0" stroke-width="1"/>
<path d="M2.3 6.5 L4 8.5 L6.6 4.5" stroke="#e8e8e8" stroke-width="1" fill="none"/>
<rect x="40.5" y="1.5" width="17" height="11" fill="#000" stroke="#808080" stroke-width="1"/>
<path d="M42 9 L49 3.5 L57 9" stroke="#6ad8e8" stroke-width="1.3" fill="none"/>
<rect x="61.5" y="3.5" width="6.5" height="6.5" fill="#000" stroke="#d0d0d0" stroke-width="1"/>
<path d="M62.8 6.5 L64.5 8.5 L67.1 4.5" stroke="#e8e8e8" stroke-width="1" fill="none"/>
<rect x="100.5" y="1.5" width="17" height="11" fill="#000" stroke="#808080" stroke-width="1"/>
<path d="M102 9 L109 3.5 L117 9" stroke="#f0a010" stroke-width="1.3" fill="none"/>
</svg>
<div style="position:absolute;left:366px;top:149.3px;font-size:7.6px;line-height:7.6px;color:#f0f0f0;font-weight:normal;white-space:nowrap;-webkit-text-stroke:0.35px #f0f0f0;">Fast 1</div>
<div style="position:absolute;left:426.5px;top:149.3px;font-size:7.6px;line-height:7.6px;color:#f0f0f0;font-weight:normal;white-space:nowrap;-webkit-text-stroke:0.35px #f0f0f0;">Fast 2</div>
<svg style="position:absolute;left:0;top:0" width="800" height="539"><path d="M177 467.5 L482 467.5" stroke="#7fe8f4" stroke-width="1.2" fill="none"/><path d="M177 474.68 L222.00 462.00 L222.20 483.50 L298.30 462.00 L298.50 483.50 L374.60 462.00 L374.80 483.50 L450.90 462.00 L451.10 483.50 L482 474.74" stroke="#f2a20e" stroke-width="1.3" fill="none"/></svg>
<div style="position:absolute;left:517px;top:104px;width:1px;height:407px;background:#a8a8a8;"></div>
<div style="position:absolute;left:518px;top:104px;width:282px;height:24px;background:linear-gradient(#383838 0%,#3d3d3d 12%,#464646 21%,#3a3a3a 29%,#363636 50%,#2a2a2a 63%,#1a1a1a 76%,#141414 100%);"></div>
<div style="position:absolute;left:520.2px;top:109.5px;width:10px;height:10px;border-radius:50%;border:1px solid #8fb08f;background:#353535;"></div>
<div style="position:absolute;left:461px;top:111.14999999999999px;width:400px;text-align:center;font-size:8.3px;line-height:8.3px;color:#f0f0f0;font-weight:normal;white-space:nowrap;-webkit-text-stroke:0.4px #f0f0f0;letter-spacing:0.12px;">FAST CHANNEL</div>
<div style="position:absolute;left:599.5px;top:136.5px;font-size:12px;line-height:12px;color:#f0f0f0;font-weight:normal;white-space:nowrap;-webkit-text-stroke:0.45px #f0f0f0;">CH 1</div>
<div style="position:absolute;left:585px;top:146.5px;font-size:27.5px;line-height:27.5px;color:#80e8f0;font-weight:normal;white-space:nowrap;letter-spacing:-1.2px;-webkit-text-stroke:0.9px #80e8f0;">191</div>
<div style="position:absolute;left:745px;top:135px;font-size:12px;line-height:12px;color:#f0f0f0;font-weight:normal;white-space:nowrap;-webkit-text-stroke:0.45px #f0f0f0;">CH 2</div>
<div style="position:absolute;left:731px;top:146.5px;font-size:27.5px;line-height:27.5px;color:#f5a000;font-weight:normal;white-space:nowrap;letter-spacing:-1.2px;-webkit-text-stroke:0.9px #f5a000;">103</div>
<div style="position:absolute;left:518px;top:184px;width:282px;height:21px;background:linear-gradient(#2a2a2a 0px,#2e2e2e 1px,#404040 2px,#3e3e3e 6px,#343434 11px,#242424 16px,#1c1c1c 21px);"></div>
<div style="position:absolute;left:459px;top:192.2px;width:400px;text-align:center;font-size:8.6px;line-height:8.6px;color:#f0f0f0;font-weight:normal;white-space:nowrap;-webkit-text-stroke:0.4px #f0f0f0;">SLOW CHANNEL</div>
<div style="position:absolute;left:518px;top:205px;width:282px;height:306px;background:#393939;"></div>
<div style="position:absolute;left:518px;top:206px;width:271px;height:303px;background:#c8c8c8;"></div>
<div style="position:absolute;left:519px;top:207px;width:53px;height:10px;background:#9c9c9c;"></div>
<div style="position:absolute;left:519px;top:207px;width:53px;text-align:center;font-size:8px;line-height:10px;color:#f4f4f4;-webkit-text-stroke:0.25px #f4f4f4;">ID (0X)</div>
<div style="position:absolute;left:519px;top:505px;width:53px;height:3px;background:#000;"></div>
<div style="position:absolute;left:519px;top:219px;width:53px;height:10px;background:#000;"></div>
<div style="position:absolute;left:519px;top:219.8px;width:53px;text-align:center;font-size:8.2px;line-height:10px;color:#f6f6f6;letter-spacing:-0.3px;-webkit-text-stroke:0.2px #f6f6f6;">1</div>
<div style="position:absolute;left:519px;top:230px;width:53px;height:10px;background:#000;"></div>
<div style="position:absolute;left:519px;top:230.8px;width:53px;text-align:center;font-size:8.2px;line-height:10px;color:#f6f6f6;letter-spacing:-0.3px;-webkit-text-stroke:0.2px #f6f6f6;">3</div>
<div style="position:absolute;left:519px;top:241px;width:53px;height:10px;background:#000;"></div>
<div style="position:absolute;left:519px;top:241.8px;width:53px;text-align:center;font-size:8.2px;line-height:10px;color:#f6f6f6;letter-spacing:-0.3px;-webkit-text-stroke:0.2px #f6f6f6;">4</div>
<div style="position:absolute;left:519px;top:252px;width:53px;height:10px;background:#000;"></div>
<div style="position:absolute;left:519px;top:252.8px;width:53px;text-align:center;font-size:8.2px;line-height:10px;color:#f6f6f6;letter-spacing:-0.3px;-webkit-text-stroke:0.2px #f6f6f6;">5</div>
<div style="position:absolute;left:519px;top:263px;width:53px;height:10px;background:#000;"></div>
<div style="position:absolute;left:519px;top:263.8px;width:53px;text-align:center;font-size:8.2px;line-height:10px;color:#f6f6f6;letter-spacing:-0.3px;-webkit-text-stroke:0.2px #f6f6f6;">6</div>
<div style="position:absolute;left:519px;top:274px;width:53px;height:10px;background:#000;"></div>
<div style="position:absolute;left:519px;top:274.8px;width:53px;text-align:center;font-size:8.2px;line-height:10px;color:#f6f6f6;letter-spacing:-0.3px;-webkit-text-stroke:0.2px #f6f6f6;">7</div>
<div style="position:absolute;left:519px;top:285px;width:53px;height:10px;background:#000;"></div>
<div style="position:absolute;left:519px;top:285.8px;width:53px;text-align:center;font-size:8.2px;line-height:10px;color:#f6f6f6;letter-spacing:-0.3px;-webkit-text-stroke:0.2px #f6f6f6;">8</div>
<div style="position:absolute;left:519px;top:296px;width:53px;height:10px;background:#000;"></div>
<div style="position:absolute;left:519px;top:296.8px;width:53px;text-align:center;font-size:8.2px;line-height:10px;color:#f6f6f6;letter-spacing:-0.3px;-webkit-text-stroke:0.2px #f6f6f6;">9</div>
<div style="position:absolute;left:519px;top:307px;width:53px;height:10px;background:#000;"></div>
<div style="position:absolute;left:519px;top:307.8px;width:53px;text-align:center;font-size:8.2px;line-height:10px;color:#f6f6f6;letter-spacing:-0.3px;-webkit-text-stroke:0.2px #f6f6f6;">A</div>
<div style="position:absolute;left:519px;top:318px;width:53px;height:10px;background:#000;"></div>
<div style="position:absolute;left:519px;top:318.8px;width:53px;text-align:center;font-size:8.2px;line-height:10px;color:#f6f6f6;letter-spacing:-0.3px;-webkit-text-stroke:0.2px #f6f6f6;">23</div>
<div style="position:absolute;left:519px;top:329px;width:53px;height:10px;background:#000;"></div>
<div style="position:absolute;left:519px;top:329.8px;width:53px;text-align:center;font-size:8.2px;line-height:10px;color:#f6f6f6;letter-spacing:-0.3px;-webkit-text-stroke:0.2px #f6f6f6;">24</div>
<div style="position:absolute;left:519px;top:340px;width:53px;height:10px;background:#000;"></div>
<div style="position:absolute;left:519px;top:340.8px;width:53px;text-align:center;font-size:8.2px;line-height:10px;color:#f6f6f6;letter-spacing:-0.3px;-webkit-text-stroke:0.2px #f6f6f6;">29</div>
<div style="position:absolute;left:519px;top:351px;width:53px;height:10px;background:#000;"></div>
<div style="position:absolute;left:519px;top:351.8px;width:53px;text-align:center;font-size:8.2px;line-height:10px;color:#f6f6f6;letter-spacing:-0.3px;-webkit-text-stroke:0.2px #f6f6f6;">2A</div>
<div style="position:absolute;left:519px;top:362px;width:53px;height:10px;background:#000;"></div>
<div style="position:absolute;left:519px;top:362.8px;width:53px;text-align:center;font-size:8.2px;line-height:10px;color:#f6f6f6;letter-spacing:-0.3px;-webkit-text-stroke:0.2px #f6f6f6;">2B</div>
<div style="position:absolute;left:519px;top:373px;width:53px;height:10px;background:#000;"></div>
<div style="position:absolute;left:519px;top:373.8px;width:53px;text-align:center;font-size:8.2px;line-height:10px;color:#f6f6f6;letter-spacing:-0.3px;-webkit-text-stroke:0.2px #f6f6f6;">2C</div>
<div style="position:absolute;left:519px;top:384px;width:53px;height:10px;background:#000;"></div>
<div style="position:absolute;left:519px;top:384.8px;width:53px;text-align:center;font-size:8.2px;line-height:10px;color:#f6f6f6;letter-spacing:-0.3px;-webkit-text-stroke:0.2px #f6f6f6;">94</div>
<div style="position:absolute;left:519px;top:395px;width:53px;height:10px;background:#000;"></div>
<div style="position:absolute;left:519px;top:395.8px;width:53px;text-align:center;font-size:8.2px;line-height:10px;color:#f6f6f6;letter-spacing:-0.3px;-webkit-text-stroke:0.2px #f6f6f6;">95</div>
<div style="position:absolute;left:519px;top:406px;width:53px;height:10px;background:#000;"></div>
<div style="position:absolute;left:519px;top:406.8px;width:53px;text-align:center;font-size:8.2px;line-height:10px;color:#f6f6f6;letter-spacing:-0.3px;-webkit-text-stroke:0.2px #f6f6f6;">96</div>
<div style="position:absolute;left:519px;top:417px;width:53px;height:10px;background:#000;"></div>
<div style="position:absolute;left:519px;top:417.8px;width:53px;text-align:center;font-size:8.2px;line-height:10px;color:#f6f6f6;letter-spacing:-0.3px;-webkit-text-stroke:0.2px #f6f6f6;">97</div>
<div style="position:absolute;left:519px;top:428px;width:53px;height:10px;background:#000;"></div>
<div style="position:absolute;left:519px;top:439px;width:53px;height:10px;background:#000;"></div>
<div style="position:absolute;left:519px;top:450px;width:53px;height:10px;background:#000;"></div>
<div style="position:absolute;left:519px;top:461px;width:53px;height:10px;background:#000;"></div>
<div style="position:absolute;left:519px;top:472px;width:53px;height:10px;background:#000;"></div>
<div style="position:absolute;left:519px;top:483px;width:53px;height:10px;background:#000;"></div>
<div style="position:absolute;left:519px;top:494px;width:53px;height:10px;background:#000;"></div>
<div style="position:absolute;left:573px;top:207px;width:56px;height:10px;background:#9c9c9c;"></div>
<div style="position:absolute;left:573px;top:207px;width:56px;text-align:center;font-size:8px;line-height:10px;color:#f4f4f4;-webkit-text-stroke:0.25px #f4f4f4;">Value</div>
<div style="position:absolute;left:573px;top:505px;width:56px;height:3px;background:#000;"></div>
<div style="position:absolute;left:573px;top:219px;width:56px;height:10px;background:#000;"></div>
<div style="position:absolute;left:573px;top:219.8px;width:56px;text-align:center;font-size:8.2px;line-height:10px;color:#f6f6f6;letter-spacing:-0.3px;-webkit-text-stroke:0.2px #f6f6f6;">0</div>
<div style="position:absolute;left:573px;top:230px;width:56px;height:10px;background:#000;"></div>
<div style="position:absolute;left:573px;top:230.8px;width:56px;text-align:center;font-size:8.2px;line-height:10px;color:#f6f6f6;letter-spacing:-0.3px;-webkit-text-stroke:0.2px #f6f6f6;">4</div>
<div style="position:absolute;left:573px;top:241px;width:56px;height:10px;background:#000;"></div>
<div style="position:absolute;left:573px;top:241.8px;width:56px;text-align:center;font-size:8.2px;line-height:10px;color:#f6f6f6;letter-spacing:-0.3px;-webkit-text-stroke:0.2px #f6f6f6;">1</div>
<div style="position:absolute;left:573px;top:252px;width:56px;height:10px;background:#000;"></div>
<div style="position:absolute;left:573px;top:252.8px;width:56px;text-align:center;font-size:8.2px;line-height:10px;color:#f6f6f6;letter-spacing:-0.3px;-webkit-text-stroke:0.2px #f6f6f6;">2</div>
<div style="position:absolute;left:573px;top:263px;width:56px;height:10px;background:#000;"></div>
<div style="position:absolute;left:573px;top:263.8px;width:56px;text-align:center;font-size:8.2px;line-height:10px;color:#f6f6f6;letter-spacing:-0.3px;-webkit-text-stroke:0.2px #f6f6f6;">3</div>
<div style="position:absolute;left:573px;top:274px;width:56px;height:10px;background:#000;"></div>
<div style="position:absolute;left:573px;top:274.8px;width:56px;text-align:center;font-size:8.2px;line-height:10px;color:#f6f6f6;letter-spacing:-0.3px;-webkit-text-stroke:0.2px #f6f6f6;">5</div>
<div style="position:absolute;left:573px;top:285px;width:56px;height:10px;background:#000;"></div>
<div style="position:absolute;left:573px;top:285.8px;width:56px;text-align:center;font-size:8.2px;line-height:10px;color:#f6f6f6;letter-spacing:-0.3px;-webkit-text-stroke:0.2px #f6f6f6;">285</div>
<div style="position:absolute;left:573px;top:296px;width:56px;height:10px;background:#000;"></div>
<div style="position:absolute;left:573px;top:296.8px;width:56px;text-align:center;font-size:8.2px;line-height:10px;color:#f6f6f6;letter-spacing:-0.3px;-webkit-text-stroke:0.2px #f6f6f6;">C1</div>
<div style="position:absolute;left:573px;top:307px;width:56px;height:10px;background:#000;"></div>
<div style="position:absolute;left:573px;top:307.8px;width:56px;text-align:center;font-size:8.2px;line-height:10px;color:#f6f6f6;letter-spacing:-0.3px;-webkit-text-stroke:0.2px #f6f6f6;">F38</div>
<div style="position:absolute;left:573px;top:318px;width:56px;height:10px;background:#000;"></div>
<div style="position:absolute;left:573px;top:318.8px;width:56px;text-align:center;font-size:8.2px;line-height:10px;color:#f6f6f6;letter-spacing:-0.3px;-webkit-text-stroke:0.2px #f6f6f6;">307</div>
<div style="position:absolute;left:573px;top:329px;width:56px;height:10px;background:#000;"></div>
<div style="position:absolute;left:573px;top:329.8px;width:56px;text-align:center;font-size:8.2px;line-height:10px;color:#f6f6f6;letter-spacing:-0.3px;-webkit-text-stroke:0.2px #f6f6f6;">0</div>
<div style="position:absolute;left:573px;top:340px;width:56px;height:10px;background:#000;"></div>
<div style="position:absolute;left:573px;top:340.8px;width:56px;text-align:center;font-size:8.2px;line-height:10px;color:#f6f6f6;letter-spacing:-0.3px;-webkit-text-stroke:0.2px #f6f6f6;">2C2</div>
<div style="position:absolute;left:573px;top:351px;width:56px;height:10px;background:#000;"></div>
<div style="position:absolute;left:573px;top:351.8px;width:56px;text-align:center;font-size:8.2px;line-height:10px;color:#f6f6f6;letter-spacing:-0.3px;-webkit-text-stroke:0.2px #f6f6f6;">F21</div>
<div style="position:absolute;left:573px;top:362px;width:56px;height:10px;background:#000;"></div>
<div style="position:absolute;left:573px;top:362.8px;width:56px;text-align:center;font-size:8.2px;line-height:10px;color:#f6f6f6;letter-spacing:-0.3px;-webkit-text-stroke:0.2px #f6f6f6;">FF0</div>
<div style="position:absolute;left:573px;top:373px;width:56px;height:10px;background:#000;"></div>
<div style="position:absolute;left:573px;top:373.8px;width:56px;text-align:center;font-size:8.2px;line-height:10px;color:#f6f6f6;letter-spacing:-0.3px;-webkit-text-stroke:0.2px #f6f6f6;">F1A</div>
<div style="position:absolute;left:573px;top:384px;width:56px;height:10px;background:#000;"></div>
<div style="position:absolute;left:573px;top:384.8px;width:56px;text-align:center;font-size:8.2px;line-height:10px;color:#f6f6f6;letter-spacing:-0.3px;-webkit-text-stroke:0.2px #f6f6f6;">354</div>
<div style="position:absolute;left:573px;top:395px;width:56px;height:10px;background:#000;"></div>
<div style="position:absolute;left:573px;top:395.8px;width:56px;text-align:center;font-size:8.2px;line-height:10px;color:#f6f6f6;letter-spacing:-0.3px;-webkit-text-stroke:0.2px #f6f6f6;">317</div>
<div style="position:absolute;left:573px;top:406px;width:56px;height:10px;background:#000;"></div>
<div style="position:absolute;left:573px;top:406.8px;width:56px;text-align:center;font-size:8.2px;line-height:10px;color:#f6f6f6;letter-spacing:-0.3px;-webkit-text-stroke:0.2px #f6f6f6;">328</div>
<div style="position:absolute;left:573px;top:417px;width:56px;height:10px;background:#000;"></div>
<div style="position:absolute;left:573px;top:417.8px;width:56px;text-align:center;font-size:8.2px;line-height:10px;color:#f6f6f6;letter-spacing:-0.3px;-webkit-text-stroke:0.2px #f6f6f6;">301</div>
<div style="position:absolute;left:573px;top:428px;width:56px;height:10px;background:#000;"></div>
<div style="position:absolute;left:573px;top:439px;width:56px;height:10px;background:#000;"></div>
<div style="position:absolute;left:573px;top:450px;width:56px;height:10px;background:#000;"></div>
<div style="position:absolute;left:573px;top:461px;width:56px;height:10px;background:#000;"></div>
<div style="position:absolute;left:573px;top:472px;width:56px;height:10px;background:#000;"></div>
<div style="position:absolute;left:573px;top:483px;width:56px;height:10px;background:#000;"></div>
<div style="position:absolute;left:573px;top:494px;width:56px;height:10px;background:#000;"></div>
<div style="position:absolute;left:630px;top:207px;width:82px;height:10px;background:#9c9c9c;"></div>
<div style="position:absolute;left:630px;top:207px;width:82px;text-align:center;font-size:8px;line-height:10px;color:#f4f4f4;-webkit-text-stroke:0.25px #f4f4f4;">Time</div>
<div style="position:absolute;left:630px;top:505px;width:82px;height:3px;background:#000;"></div>
<div style="position:absolute;left:630px;top:219px;width:82px;height:10px;background:#000;"></div>
<div style="position:absolute;left:630px;top:219.8px;width:82px;text-align:center;font-size:8.2px;line-height:10px;color:#f6f6f6;letter-spacing:-0.3px;-webkit-text-stroke:0.2px #f6f6f6;">15:13:20.109</div>
<div style="position:absolute;left:630px;top:230px;width:82px;height:10px;background:#000;"></div>
<div style="position:absolute;left:630px;top:230.8px;width:82px;text-align:center;font-size:8.2px;line-height:10px;color:#f6f6f6;letter-spacing:-0.3px;-webkit-text-stroke:0.2px #f6f6f6;">15:13:19.887</div>
<div style="position:absolute;left:630px;top:241px;width:82px;height:10px;background:#000;"></div>
<div style="position:absolute;left:630px;top:241.8px;width:82px;text-align:center;font-size:8.2px;line-height:10px;color:#f6f6f6;letter-spacing:-0.3px;-webkit-text-stroke:0.2px #f6f6f6;">15:13:19.902</div>
<div style="position:absolute;left:630px;top:252px;width:82px;height:10px;background:#000;"></div>
<div style="position:absolute;left:630px;top:252.8px;width:82px;text-align:center;font-size:8.2px;line-height:10px;color:#f6f6f6;letter-spacing:-0.3px;-webkit-text-stroke:0.2px #f6f6f6;">15:13:19.935</div>
<div style="position:absolute;left:630px;top:263px;width:82px;height:10px;background:#000;"></div>
<div style="position:absolute;left:630px;top:263.8px;width:82px;text-align:center;font-size:8.2px;line-height:10px;color:#f6f6f6;letter-spacing:-0.3px;-webkit-text-stroke:0.2px #f6f6f6;">15:13:19.952</div>
<div style="position:absolute;left:630px;top:274px;width:82px;height:10px;background:#000;"></div>
<div style="position:absolute;left:630px;top:274.8px;width:82px;text-align:center;font-size:8.2px;line-height:10px;color:#f6f6f6;letter-spacing:-0.3px;-webkit-text-stroke:0.2px #f6f6f6;">15:13:19.968</div>
<div style="position:absolute;left:630px;top:285px;width:82px;height:10px;background:#000;"></div>
<div style="position:absolute;left:630px;top:285.8px;width:82px;text-align:center;font-size:8.2px;line-height:10px;color:#f6f6f6;letter-spacing:-0.3px;-webkit-text-stroke:0.2px #f6f6f6;">15:13:19.999</div>
<div style="position:absolute;left:630px;top:296px;width:82px;height:10px;background:#000;"></div>
<div style="position:absolute;left:630px;top:296.8px;width:82px;text-align:center;font-size:8.2px;line-height:10px;color:#f6f6f6;letter-spacing:-0.3px;-webkit-text-stroke:0.2px #f6f6f6;">15:13:20.015</div>
<div style="position:absolute;left:630px;top:307px;width:82px;height:10px;background:#000;"></div>
<div style="position:absolute;left:630px;top:307.8px;width:82px;text-align:center;font-size:8.2px;line-height:10px;color:#f6f6f6;letter-spacing:-0.3px;-webkit-text-stroke:0.2px #f6f6f6;">15:13:20.031</div>
<div style="position:absolute;left:630px;top:318px;width:82px;height:10px;background:#000;"></div>
<div style="position:absolute;left:630px;top:318.8px;width:82px;text-align:center;font-size:8.2px;line-height:10px;color:#f6f6f6;letter-spacing:-0.3px;-webkit-text-stroke:0.2px #f6f6f6;">15:13:19.761</div>
<div style="position:absolute;left:630px;top:329px;width:82px;height:10px;background:#000;"></div>
<div style="position:absolute;left:630px;top:329.8px;width:82px;text-align:center;font-size:8.2px;line-height:10px;color:#f6f6f6;letter-spacing:-0.3px;-webkit-text-stroke:0.2px #f6f6f6;">15:13:19.777</div>
<div style="position:absolute;left:630px;top:340px;width:82px;height:10px;background:#000;"></div>
<div style="position:absolute;left:630px;top:340.8px;width:82px;text-align:center;font-size:8.2px;line-height:10px;color:#f6f6f6;letter-spacing:-0.3px;-webkit-text-stroke:0.2px #f6f6f6;">15:13:19.809</div>
<div style="position:absolute;left:630px;top:351px;width:82px;height:10px;background:#000;"></div>
<div style="position:absolute;left:630px;top:351.8px;width:82px;text-align:center;font-size:8.2px;line-height:10px;color:#f6f6f6;letter-spacing:-0.3px;-webkit-text-stroke:0.2px #f6f6f6;">15:13:19.823</div>
<div style="position:absolute;left:630px;top:362px;width:82px;height:10px;background:#000;"></div>
<div style="position:absolute;left:630px;top:362.8px;width:82px;text-align:center;font-size:8.2px;line-height:10px;color:#f6f6f6;letter-spacing:-0.3px;-webkit-text-stroke:0.2px #f6f6f6;">15:13:19.840</div>
<div style="position:absolute;left:630px;top:373px;width:82px;height:10px;background:#000;"></div>
<div style="position:absolute;left:630px;top:373.8px;width:82px;text-align:center;font-size:8.2px;line-height:10px;color:#f6f6f6;letter-spacing:-0.3px;-webkit-text-stroke:0.2px #f6f6f6;">15:13:19.872</div>
<div style="position:absolute;left:630px;top:384px;width:82px;height:10px;background:#000;"></div>
<div style="position:absolute;left:630px;top:384.8px;width:82px;text-align:center;font-size:8.2px;line-height:10px;color:#f6f6f6;letter-spacing:-0.3px;-webkit-text-stroke:0.2px #f6f6f6;">15:13:20.062</div>
<div style="position:absolute;left:630px;top:395px;width:82px;height:10px;background:#000;"></div>
<div style="position:absolute;left:630px;top:395.8px;width:82px;text-align:center;font-size:8.2px;line-height:10px;color:#f6f6f6;letter-spacing:-0.3px;-webkit-text-stroke:0.2px #f6f6f6;">15:13:20.077</div>
<div style="position:absolute;left:630px;top:406px;width:82px;height:10px;background:#000;"></div>
<div style="position:absolute;left:630px;top:406.8px;width:82px;text-align:center;font-size:8.2px;line-height:10px;color:#f6f6f6;letter-spacing:-0.3px;-webkit-text-stroke:0.2px #f6f6f6;">15:13:20.093</div>
<div style="position:absolute;left:630px;top:417px;width:82px;height:10px;background:#000;"></div>
<div style="position:absolute;left:630px;top:417.8px;width:82px;text-align:center;font-size:8.2px;line-height:10px;color:#f6f6f6;letter-spacing:-0.3px;-webkit-text-stroke:0.2px #f6f6f6;">15:13:19.745</div>
<div style="position:absolute;left:630px;top:428px;width:82px;height:10px;background:#000;"></div>
<div style="position:absolute;left:630px;top:439px;width:82px;height:10px;background:#000;"></div>
<div style="position:absolute;left:630px;top:450px;width:82px;height:10px;background:#000;"></div>
<div style="position:absolute;left:630px;top:461px;width:82px;height:10px;background:#000;"></div>
<div style="position:absolute;left:630px;top:472px;width:82px;height:10px;background:#000;"></div>
<div style="position:absolute;left:630px;top:483px;width:82px;height:10px;background:#000;"></div>
<div style="position:absolute;left:630px;top:494px;width:82px;height:10px;background:#000;"></div>
<div style="position:absolute;left:713px;top:207px;width:74px;height:10px;background:#9c9c9c;"></div>
<div style="position:absolute;left:713px;top:207px;width:74px;text-align:center;font-size:8px;line-height:10px;color:#f4f4f4;-webkit-text-stroke:0.25px #f4f4f4;">Cyclic (µs)</div>
<div style="position:absolute;left:713px;top:505px;width:74px;height:3px;background:#000;"></div>
<div style="position:absolute;left:713px;top:219px;width:74px;height:10px;background:#000;"></div>
<div style="position:absolute;left:713px;top:219.8px;width:74px;text-align:center;font-size:8.2px;line-height:10px;color:#f6f6f6;letter-spacing:-0.3px;-webkit-text-stroke:0.2px #f6f6f6;">62166</div>
<div style="position:absolute;left:713px;top:230px;width:74px;height:10px;background:#000;"></div>
<div style="position:absolute;left:713px;top:230.8px;width:74px;text-align:center;font-size:8.2px;line-height:10px;color:#f6f6f6;letter-spacing:-0.3px;-webkit-text-stroke:0.2px #f6f6f6;">377613</div>
<div style="position:absolute;left:713px;top:241px;width:74px;height:10px;background:#000;"></div>
<div style="position:absolute;left:713px;top:241.8px;width:74px;text-align:center;font-size:8.2px;line-height:10px;color:#f6f6f6;letter-spacing:-0.3px;-webkit-text-stroke:0.2px #f6f6f6;">377104</div>
<div style="position:absolute;left:713px;top:252px;width:74px;height:10px;background:#000;"></div>
<div style="position:absolute;left:713px;top:252.8px;width:74px;text-align:center;font-size:8.2px;line-height:10px;color:#f6f6f6;letter-spacing:-0.3px;-webkit-text-stroke:0.2px #f6f6f6;">378064</div>
<div style="position:absolute;left:713px;top:263px;width:74px;height:10px;background:#000;"></div>
<div style="position:absolute;left:713px;top:263.8px;width:74px;text-align:center;font-size:8.2px;line-height:10px;color:#f6f6f6;letter-spacing:-0.3px;-webkit-text-stroke:0.2px #f6f6f6;">380089</div>
<div style="position:absolute;left:713px;top:274px;width:74px;height:10px;background:#000;"></div>
<div style="position:absolute;left:713px;top:274.8px;width:74px;text-align:center;font-size:8.2px;line-height:10px;color:#f6f6f6;letter-spacing:-0.3px;-webkit-text-stroke:0.2px #f6f6f6;">380071</div>
<div style="position:absolute;left:713px;top:285px;width:74px;height:10px;background:#000;"></div>
<div style="position:absolute;left:713px;top:285.8px;width:74px;text-align:center;font-size:8.2px;line-height:10px;color:#f6f6f6;letter-spacing:-0.3px;-webkit-text-stroke:0.2px #f6f6f6;">379049</div>
<div style="position:absolute;left:713px;top:296px;width:74px;height:10px;background:#000;"></div>
<div style="position:absolute;left:713px;top:296.8px;width:74px;text-align:center;font-size:8.2px;line-height:10px;color:#f6f6f6;letter-spacing:-0.3px;-webkit-text-stroke:0.2px #f6f6f6;">380552</div>
<div style="position:absolute;left:713px;top:307px;width:74px;height:10px;background:#000;"></div>
<div style="position:absolute;left:713px;top:307.8px;width:74px;text-align:center;font-size:8.2px;line-height:10px;color:#f6f6f6;letter-spacing:-0.3px;-webkit-text-stroke:0.2px #f6f6f6;">381001</div>
<div style="position:absolute;left:713px;top:318px;width:74px;height:10px;background:#000;"></div>
<div style="position:absolute;left:713px;top:318.8px;width:74px;text-align:center;font-size:8.2px;line-height:10px;color:#f6f6f6;letter-spacing:-0.3px;-webkit-text-stroke:0.2px #f6f6f6;">379753</div>
<div style="position:absolute;left:713px;top:329px;width:74px;height:10px;background:#000;"></div>
<div style="position:absolute;left:713px;top:329.8px;width:74px;text-align:center;font-size:8.2px;line-height:10px;color:#f6f6f6;letter-spacing:-0.3px;-webkit-text-stroke:0.2px #f6f6f6;">379706</div>
<div style="position:absolute;left:713px;top:340px;width:74px;height:10px;background:#000;"></div>
<div style="position:absolute;left:713px;top:340.8px;width:74px;text-align:center;font-size:8.2px;line-height:10px;color:#f6f6f6;letter-spacing:-0.3px;-webkit-text-stroke:0.2px #f6f6f6;">379721</div>
<div style="position:absolute;left:713px;top:351px;width:74px;height:10px;background:#000;"></div>
<div style="position:absolute;left:713px;top:351.8px;width:74px;text-align:center;font-size:8.2px;line-height:10px;color:#f6f6f6;letter-spacing:-0.3px;-webkit-text-stroke:0.2px #f6f6f6;">377245</div>
<div style="position:absolute;left:713px;top:362px;width:74px;height:10px;background:#000;"></div>
<div style="position:absolute;left:713px;top:362.8px;width:74px;text-align:center;font-size:8.2px;line-height:10px;color:#f6f6f6;letter-spacing:-0.3px;-webkit-text-stroke:0.2px #f6f6f6;">377637</div>
<div style="position:absolute;left:713px;top:373px;width:74px;height:10px;background:#000;"></div>
<div style="position:absolute;left:713px;top:373.8px;width:74px;text-align:center;font-size:8.2px;line-height:10px;color:#f6f6f6;letter-spacing:-0.3px;-webkit-text-stroke:0.2px #f6f6f6;">380646</div>
<div style="position:absolute;left:713px;top:384px;width:74px;height:10px;background:#000;"></div>
<div style="position:absolute;left:713px;top:384.8px;width:74px;text-align:center;font-size:8.2px;line-height:10px;color:#f6f6f6;letter-spacing:-0.3px;-webkit-text-stroke:0.2px #f6f6f6;">380472</div>
<div style="position:absolute;left:713px;top:395px;width:74px;height:10px;background:#000;"></div>
<div style="position:absolute;left:713px;top:395.8px;width:74px;text-align:center;font-size:8.2px;line-height:10px;color:#f6f6f6;letter-spacing:-0.3px;-webkit-text-stroke:0.2px #f6f6f6;">378472</div>
<div style="position:absolute;left:713px;top:406px;width:74px;height:10px;background:#000;"></div>
<div style="position:absolute;left:713px;top:406.8px;width:74px;text-align:center;font-size:8.2px;line-height:10px;color:#f6f6f6;letter-spacing:-0.3px;-webkit-text-stroke:0.2px #f6f6f6;">380471</div>
<div style="position:absolute;left:713px;top:417px;width:74px;height:10px;background:#000;"></div>
<div style="position:absolute;left:713px;top:417.8px;width:74px;text-align:center;font-size:8.2px;line-height:10px;color:#f6f6f6;letter-spacing:-0.3px;-webkit-text-stroke:0.2px #f6f6f6;">378738</div>
<div style="position:absolute;left:713px;top:428px;width:74px;height:10px;background:#000;"></div>
<div style="position:absolute;left:713px;top:439px;width:74px;height:10px;background:#000;"></div>
<div style="position:absolute;left:713px;top:450px;width:74px;height:10px;background:#000;"></div>
<div style="position:absolute;left:713px;top:461px;width:74px;height:10px;background:#000;"></div>
<div style="position:absolute;left:713px;top:472px;width:74px;height:10px;background:#000;"></div>
<div style="position:absolute;left:713px;top:483px;width:74px;height:10px;background:#000;"></div>
<div style="position:absolute;left:713px;top:494px;width:74px;height:10px;background:#000;"></div>
<div style="position:absolute;left:519px;top:228.6px;width:269px;height:1.7px;background:#6c6c6c;"></div>
<div style="position:absolute;left:519px;top:239.6px;width:269px;height:1.7px;background:#6c6c6c;"></div>
<div style="position:absolute;left:519px;top:250.6px;width:269px;height:1.7px;background:#6c6c6c;"></div>
<div style="position:absolute;left:519px;top:261.6px;width:269px;height:1.7px;background:#6c6c6c;"></div>
<div style="position:absolute;left:519px;top:272.6px;width:269px;height:1.7px;background:#6c6c6c;"></div>
<div style="position:absolute;left:519px;top:283.6px;width:269px;height:1.7px;background:#6c6c6c;"></div>
<div style="position:absolute;left:519px;top:294.6px;width:269px;height:1.7px;background:#6c6c6c;"></div>
<div style="position:absolute;left:519px;top:305.6px;width:269px;height:1.7px;background:#6c6c6c;"></div>
<div style="position:absolute;left:519px;top:316.6px;width:269px;height:1.7px;background:#6c6c6c;"></div>
<div style="position:absolute;left:519px;top:327.6px;width:269px;height:1.7px;background:#6c6c6c;"></div>
<div style="position:absolute;left:519px;top:338.6px;width:269px;height:1.7px;background:#6c6c6c;"></div>
<div style="position:absolute;left:519px;top:349.6px;width:269px;height:1.7px;background:#6c6c6c;"></div>
<div style="position:absolute;left:519px;top:360.6px;width:269px;height:1.7px;background:#6c6c6c;"></div>
<div style="position:absolute;left:519px;top:371.6px;width:269px;height:1.7px;background:#6c6c6c;"></div>
<div style="position:absolute;left:519px;top:382.6px;width:269px;height:1.7px;background:#6c6c6c;"></div>
<div style="position:absolute;left:519px;top:393.6px;width:269px;height:1.7px;background:#6c6c6c;"></div>
<div style="position:absolute;left:519px;top:404.6px;width:269px;height:1.7px;background:#6c6c6c;"></div>
<div style="position:absolute;left:519px;top:415.6px;width:269px;height:1.7px;background:#6c6c6c;"></div>
<div style="position:absolute;left:519px;top:426.6px;width:269px;height:1.7px;background:#6c6c6c;"></div>
<div style="position:absolute;left:519px;top:437.6px;width:269px;height:1.7px;background:#6c6c6c;"></div>
<div style="position:absolute;left:519px;top:448.6px;width:269px;height:1.7px;background:#6c6c6c;"></div>
<div style="position:absolute;left:519px;top:459.6px;width:269px;height:1.7px;background:#6c6c6c;"></div>
<div style="position:absolute;left:519px;top:470.6px;width:269px;height:1.7px;background:#6c6c6c;"></div>
<div style="position:absolute;left:519px;top:481.6px;width:269px;height:1.7px;background:#6c6c6c;"></div>
<div style="position:absolute;left:519px;top:492.6px;width:269px;height:1.7px;background:#6c6c6c;"></div>
<div style="position:absolute;left:519px;top:503.6px;width:269px;height:1.7px;background:#6c6c6c;"></div>
<div style="position:absolute;left:572px;top:218px;width:1px;height:290px;background:#c4c4c4;"></div>
<div style="position:absolute;left:629px;top:218px;width:1px;height:290px;background:#c4c4c4;"></div>
<div style="position:absolute;left:712px;top:218px;width:1px;height:290px;background:#c4c4c4;"></div>
<div style="position:absolute;left:788px;top:206px;width:11px;height:303px;background:#ededed;"></div>
<svg style="position:absolute;left:788px;top:206px" width="11" height="303"><path d="M3 10 L5.5 7.5 L8 10" stroke="#505050" stroke-width="1.2" fill="none"/><path d="M3 295.5 L5.5 298 L8 295.5" stroke="#505050" stroke-width="1.2" fill="none"/></svg>
<div style="position:absolute;left:0px;top:510px;width:800px;height:29px;background:linear-gradient(#2f2f2f 0px,#333 1px,#606060 2px,#666 5px,#636363 7px,#575757 8.5px,#555 22px,#4a4a4a 24px,#454545 29px);"></div>
<div style="position:absolute;left:0px;top:510px;width:2px;height:29px;background:#0b2149;"></div>
<div style="position:absolute;left:2px;top:510px;width:1px;height:29px;background:#161616;"></div>
<div style="position:absolute;left:8px;top:522.5px;font-size:8.5px;line-height:8.5px;color:#ececec;font-weight:normal;white-space:nowrap;-webkit-text-stroke:0.35px #ececec;">Folder Path</div>
<div style="position:absolute;left:58.5px;top:519.5px;width:163.8px;height:15px;background:#000;border:1px solid #c0c0c0;border-left-color:#5a5a5a;border-top-color:#4a4a4a;"></div>
<div style="position:absolute;left:65px;top:519.5px;width:157.3px;height:1px;background:#b4b4b4;"></div>
<div style="position:absolute;left:65px;top:520px;width:1px;height:14px;background:#6a6a6a;"></div>
<div style="position:absolute;left:66.5px;top:522.5px;font-size:7.55px;line-height:7.55px;color:#5ac8e0;font-weight:normal;white-space:nowrap;">C:₩Users₩MSI PC₩Desktop₩Temp</div>
<div style="position:absolute;left:225px;top:519.2px;width:11px;height:13.6px;border-radius:2.5px;background:#000;border:1px solid #9a9a9a;"></div>
<svg style="position:absolute;left:226px;top:521.8px;transform:scaleX(0.9);transform-origin:0 0;" width="9" height="8"><path d="M0.5 0.8 Q1.2 0.2 1.8 0.9 L2.2 2 L6.2 2 Q7 2.1 7.3 2.8 L8.3 3.2 L8 5.8 L1.3 5.8 Q0.5 5.6 0.5 4.8 Z" fill="#e8a800"/><rect x="1.8" y="3.2" width="6" height="0.8" fill="#7a5a00"/></svg>
<div style="position:absolute;left:251.5px;top:523.3px;font-size:8.4px;line-height:8.4px;color:#f0f0f0;font-weight:normal;white-space:nowrap;-webkit-text-stroke:0.25px #f0f0f0;">Counter</div>
<div style="position:absolute;left:284px;top:518.5px;width:58px;height:16px;background:#000;border:1px solid #444;"></div>
<div style="position:absolute;left:113px;top:523.4px;width:400px;text-align:center;font-size:10.2px;line-height:10.2px;color:#80e0f0;font-weight:normal;white-space:nowrap;-webkit-text-stroke:0.5px #80e0f0;">1801</div>
<div style="position:absolute;left:353px;top:520px;width:47px;height:13px;background:linear-gradient(#363636,#171717);border:1px solid #2c2c2c;"></div>
<div style="position:absolute;left:354px;top:521px;width:23px;height:11px;background:linear-gradient(90deg,#727272 0,#727272 7px,#626262 7px,#6e6e6e 8px,#626262 9px,#707070 10px,#606060 11px,#707070 12px,#707070 16px,#666 16.5px,#727272 17px);"></div>
<div style="position:absolute;left:547.5px;top:521px;width:75px;height:12.5px;background:#000;border:1px solid #3a3a3a;"></div>
<div style="position:absolute;left:644px;top:521px;width:73.5px;height:12.5px;background:#000;border:1px solid #3a3a3a;"></div>
<div style="position:absolute;left:728.3px;top:517.3px;width:22.2px;height:18px;border-radius:3px;border:1px solid #d0d0d0;background:linear-gradient(#a0a0a0 0%,#8a8a8a 40%,#555 52%,#262626 70%,#1a1a1a 100%);box-shadow:0 0 0 0.6px #222;"></div>
<svg style="position:absolute;left:733px;top:519px" width="14" height="15"><path d="M3 1 L9 1 L11 4 L11 8 L3 8 Z" fill="#e4e4e4"/><path d="M1 6 L13 6 L12 14 L2 14 Z" fill="#6aa0e0"/><rect x="2" y="7" width="10" height="2" fill="#8ab8ec"/></svg>
</body></html>
